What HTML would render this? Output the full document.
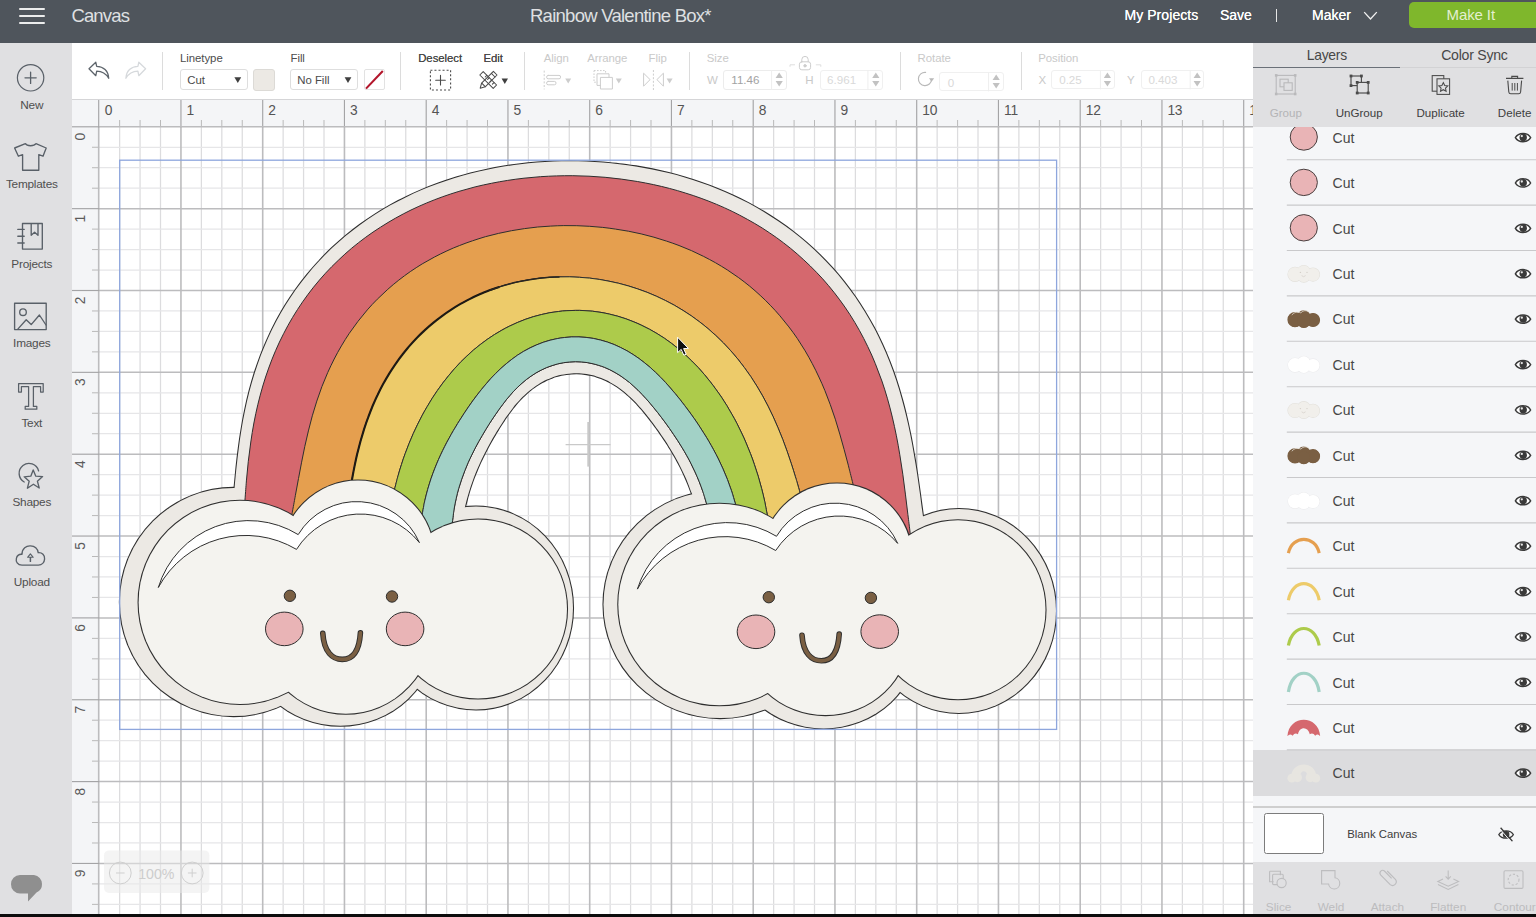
<!DOCTYPE html><html><head><meta charset="utf-8"><title>Canvas</title><style>

*{box-sizing:border-box;margin:0;padding:0}
html,body{width:1536px;height:917px;overflow:hidden;background:#fff}
body{font-family:"Liberation Sans",sans-serif;position:relative;color:#4a4a4a}
.abs{position:absolute}
#top{left:0;top:0;width:1536px;height:43.5px;background:#4f555c}
#top .t{position:absolute;color:#f2f2f2;white-space:nowrap}
#side{left:0;top:43px;width:72px;height:872px;background:#e0e0e2}
#side .lbl{position:absolute;left:0;width:63.6px;text-align:center;font-size:11.8px;color:#4f4f4f;letter-spacing:-.22px}
#tool{left:72px;top:43px;width:1181px;height:56px;background:#fff}
#tool .l{position:absolute;font-size:11.4px;letter-spacing:-.05px;color:#4c4c4c;white-space:nowrap}
#tool .d{color:#c9c9c9}
#tool .sep{position:absolute;top:9px;width:1px;height:38px;background:#dcdcdc}
#tool .box{position:absolute;border:1px solid #dedede;border-radius:3px;background:#fff;font-size:11.5px;color:#4a4a4a;padding:0 0 0 6px;line-height:18px;white-space:nowrap}
#tool .boxd{border-color:#f0f0f0;color:#d9d9d9}
#canvas{left:72px;top:99px;width:1181px;height:815px;background:#fff;overflow:hidden}
#bottombar{left:0;top:914px;width:1536px;height:3px;background:#0c0c0c}

</style></head><body>
<svg class="abs" style="left:72px;top:99px" width="1181" height="815" viewBox="72 99 1181 815">
<rect x="72" y="99" width="1181" height="27.8" fill="#f4f5f7"/>
<rect x="72" y="99" width="27.2" height="816" fill="#f4f5f7"/>
<path d="M119.64 126.8V915" stroke="#dcdcde" stroke-width="1.25"/>
<path d="M140.07 126.8V915" stroke="#dcdcde" stroke-width="1.25"/>
<path d="M160.51 126.8V915" stroke="#dcdcde" stroke-width="1.25"/>
<path d="M201.39 126.8V915" stroke="#dcdcde" stroke-width="1.25"/>
<path d="M221.82 126.8V915" stroke="#dcdcde" stroke-width="1.25"/>
<path d="M242.26 126.8V915" stroke="#dcdcde" stroke-width="1.25"/>
<path d="M283.14 126.8V915" stroke="#dcdcde" stroke-width="1.25"/>
<path d="M303.57 126.8V915" stroke="#dcdcde" stroke-width="1.25"/>
<path d="M324.01 126.8V915" stroke="#dcdcde" stroke-width="1.25"/>
<path d="M364.89 126.8V915" stroke="#dcdcde" stroke-width="1.25"/>
<path d="M385.32 126.8V915" stroke="#dcdcde" stroke-width="1.25"/>
<path d="M405.76 126.8V915" stroke="#dcdcde" stroke-width="1.25"/>
<path d="M446.64 126.8V915" stroke="#dcdcde" stroke-width="1.25"/>
<path d="M467.07 126.8V915" stroke="#dcdcde" stroke-width="1.25"/>
<path d="M487.51 126.8V915" stroke="#dcdcde" stroke-width="1.25"/>
<path d="M528.39 126.8V915" stroke="#dcdcde" stroke-width="1.25"/>
<path d="M548.83 126.8V915" stroke="#dcdcde" stroke-width="1.25"/>
<path d="M569.26 126.8V915" stroke="#dcdcde" stroke-width="1.25"/>
<path d="M610.14 126.8V915" stroke="#dcdcde" stroke-width="1.25"/>
<path d="M630.58 126.8V915" stroke="#dcdcde" stroke-width="1.25"/>
<path d="M651.01 126.8V915" stroke="#dcdcde" stroke-width="1.25"/>
<path d="M691.89 126.8V915" stroke="#dcdcde" stroke-width="1.25"/>
<path d="M712.33 126.8V915" stroke="#dcdcde" stroke-width="1.25"/>
<path d="M732.76 126.8V915" stroke="#dcdcde" stroke-width="1.25"/>
<path d="M773.64 126.8V915" stroke="#dcdcde" stroke-width="1.25"/>
<path d="M794.08 126.8V915" stroke="#dcdcde" stroke-width="1.25"/>
<path d="M814.51 126.8V915" stroke="#dcdcde" stroke-width="1.25"/>
<path d="M855.39 126.8V915" stroke="#dcdcde" stroke-width="1.25"/>
<path d="M875.83 126.8V915" stroke="#dcdcde" stroke-width="1.25"/>
<path d="M896.26 126.8V915" stroke="#dcdcde" stroke-width="1.25"/>
<path d="M937.14 126.8V915" stroke="#dcdcde" stroke-width="1.25"/>
<path d="M957.58 126.8V915" stroke="#dcdcde" stroke-width="1.25"/>
<path d="M978.01 126.8V915" stroke="#dcdcde" stroke-width="1.25"/>
<path d="M1018.89 126.8V915" stroke="#dcdcde" stroke-width="1.25"/>
<path d="M1039.33 126.8V915" stroke="#dcdcde" stroke-width="1.25"/>
<path d="M1059.76 126.8V915" stroke="#dcdcde" stroke-width="1.25"/>
<path d="M1100.64 126.8V915" stroke="#dcdcde" stroke-width="1.25"/>
<path d="M1121.08 126.8V915" stroke="#dcdcde" stroke-width="1.25"/>
<path d="M1141.51 126.8V915" stroke="#dcdcde" stroke-width="1.25"/>
<path d="M1182.39 126.8V915" stroke="#dcdcde" stroke-width="1.25"/>
<path d="M1202.83 126.8V915" stroke="#dcdcde" stroke-width="1.25"/>
<path d="M1223.26 126.8V915" stroke="#dcdcde" stroke-width="1.25"/>
<path d="M99.2 147.26H1253" stroke="#e6e6e8" stroke-width="1.25"/>
<path d="M99.2 167.72H1253" stroke="#e6e6e8" stroke-width="1.25"/>
<path d="M99.2 188.19H1253" stroke="#e6e6e8" stroke-width="1.25"/>
<path d="M99.2 229.11H1253" stroke="#e6e6e8" stroke-width="1.25"/>
<path d="M99.2 249.57H1253" stroke="#e6e6e8" stroke-width="1.25"/>
<path d="M99.2 270.04H1253" stroke="#e6e6e8" stroke-width="1.25"/>
<path d="M99.2 310.96H1253" stroke="#e6e6e8" stroke-width="1.25"/>
<path d="M99.2 331.43H1253" stroke="#e6e6e8" stroke-width="1.25"/>
<path d="M99.2 351.89H1253" stroke="#e6e6e8" stroke-width="1.25"/>
<path d="M99.2 392.81H1253" stroke="#e6e6e8" stroke-width="1.25"/>
<path d="M99.2 413.27H1253" stroke="#e6e6e8" stroke-width="1.25"/>
<path d="M99.2 433.74H1253" stroke="#e6e6e8" stroke-width="1.25"/>
<path d="M99.2 474.66H1253" stroke="#e6e6e8" stroke-width="1.25"/>
<path d="M99.2 495.12H1253" stroke="#e6e6e8" stroke-width="1.25"/>
<path d="M99.2 515.59H1253" stroke="#e6e6e8" stroke-width="1.25"/>
<path d="M99.2 556.51H1253" stroke="#e6e6e8" stroke-width="1.25"/>
<path d="M99.2 576.97H1253" stroke="#e6e6e8" stroke-width="1.25"/>
<path d="M99.2 597.44H1253" stroke="#e6e6e8" stroke-width="1.25"/>
<path d="M99.2 638.36H1253" stroke="#e6e6e8" stroke-width="1.25"/>
<path d="M99.2 658.82H1253" stroke="#e6e6e8" stroke-width="1.25"/>
<path d="M99.2 679.29H1253" stroke="#e6e6e8" stroke-width="1.25"/>
<path d="M99.2 720.21H1253" stroke="#e6e6e8" stroke-width="1.25"/>
<path d="M99.2 740.67H1253" stroke="#e6e6e8" stroke-width="1.25"/>
<path d="M99.2 761.14H1253" stroke="#e6e6e8" stroke-width="1.25"/>
<path d="M99.2 802.06H1253" stroke="#e6e6e8" stroke-width="1.25"/>
<path d="M99.2 822.52H1253" stroke="#e6e6e8" stroke-width="1.25"/>
<path d="M99.2 842.99H1253" stroke="#e6e6e8" stroke-width="1.25"/>
<path d="M99.2 883.91H1253" stroke="#e6e6e8" stroke-width="1.25"/>
<path d="M99.2 904.37H1253" stroke="#e6e6e8" stroke-width="1.25"/>
<path d="M119.64 120V126.8" stroke="#b9b9b9" stroke-width="1"/>
<path d="M140.07 120V126.8" stroke="#b9b9b9" stroke-width="1"/>
<path d="M160.51 120V126.8" stroke="#b9b9b9" stroke-width="1"/>
<path d="M201.39 120V126.8" stroke="#b9b9b9" stroke-width="1"/>
<path d="M221.82 120V126.8" stroke="#b9b9b9" stroke-width="1"/>
<path d="M242.26 120V126.8" stroke="#b9b9b9" stroke-width="1"/>
<path d="M283.14 120V126.8" stroke="#b9b9b9" stroke-width="1"/>
<path d="M303.57 120V126.8" stroke="#b9b9b9" stroke-width="1"/>
<path d="M324.01 120V126.8" stroke="#b9b9b9" stroke-width="1"/>
<path d="M364.89 120V126.8" stroke="#b9b9b9" stroke-width="1"/>
<path d="M385.32 120V126.8" stroke="#b9b9b9" stroke-width="1"/>
<path d="M405.76 120V126.8" stroke="#b9b9b9" stroke-width="1"/>
<path d="M446.64 120V126.8" stroke="#b9b9b9" stroke-width="1"/>
<path d="M467.07 120V126.8" stroke="#b9b9b9" stroke-width="1"/>
<path d="M487.51 120V126.8" stroke="#b9b9b9" stroke-width="1"/>
<path d="M528.39 120V126.8" stroke="#b9b9b9" stroke-width="1"/>
<path d="M548.83 120V126.8" stroke="#b9b9b9" stroke-width="1"/>
<path d="M569.26 120V126.8" stroke="#b9b9b9" stroke-width="1"/>
<path d="M610.14 120V126.8" stroke="#b9b9b9" stroke-width="1"/>
<path d="M630.58 120V126.8" stroke="#b9b9b9" stroke-width="1"/>
<path d="M651.01 120V126.8" stroke="#b9b9b9" stroke-width="1"/>
<path d="M691.89 120V126.8" stroke="#b9b9b9" stroke-width="1"/>
<path d="M712.33 120V126.8" stroke="#b9b9b9" stroke-width="1"/>
<path d="M732.76 120V126.8" stroke="#b9b9b9" stroke-width="1"/>
<path d="M773.64 120V126.8" stroke="#b9b9b9" stroke-width="1"/>
<path d="M794.08 120V126.8" stroke="#b9b9b9" stroke-width="1"/>
<path d="M814.51 120V126.8" stroke="#b9b9b9" stroke-width="1"/>
<path d="M855.39 120V126.8" stroke="#b9b9b9" stroke-width="1"/>
<path d="M875.83 120V126.8" stroke="#b9b9b9" stroke-width="1"/>
<path d="M896.26 120V126.8" stroke="#b9b9b9" stroke-width="1"/>
<path d="M937.14 120V126.8" stroke="#b9b9b9" stroke-width="1"/>
<path d="M957.58 120V126.8" stroke="#b9b9b9" stroke-width="1"/>
<path d="M978.01 120V126.8" stroke="#b9b9b9" stroke-width="1"/>
<path d="M1018.89 120V126.8" stroke="#b9b9b9" stroke-width="1"/>
<path d="M1039.33 120V126.8" stroke="#b9b9b9" stroke-width="1"/>
<path d="M1059.76 120V126.8" stroke="#b9b9b9" stroke-width="1"/>
<path d="M1100.64 120V126.8" stroke="#b9b9b9" stroke-width="1"/>
<path d="M1121.08 120V126.8" stroke="#b9b9b9" stroke-width="1"/>
<path d="M1141.51 120V126.8" stroke="#b9b9b9" stroke-width="1"/>
<path d="M1182.39 120V126.8" stroke="#b9b9b9" stroke-width="1"/>
<path d="M1202.83 120V126.8" stroke="#b9b9b9" stroke-width="1"/>
<path d="M1223.26 120V126.8" stroke="#b9b9b9" stroke-width="1"/>
<path d="M92 147.26H99.2" stroke="#b9b9b9" stroke-width="1"/>
<path d="M92 167.72H99.2" stroke="#b9b9b9" stroke-width="1"/>
<path d="M92 188.19H99.2" stroke="#b9b9b9" stroke-width="1"/>
<path d="M92 229.11H99.2" stroke="#b9b9b9" stroke-width="1"/>
<path d="M92 249.57H99.2" stroke="#b9b9b9" stroke-width="1"/>
<path d="M92 270.04H99.2" stroke="#b9b9b9" stroke-width="1"/>
<path d="M92 310.96H99.2" stroke="#b9b9b9" stroke-width="1"/>
<path d="M92 331.43H99.2" stroke="#b9b9b9" stroke-width="1"/>
<path d="M92 351.89H99.2" stroke="#b9b9b9" stroke-width="1"/>
<path d="M92 392.81H99.2" stroke="#b9b9b9" stroke-width="1"/>
<path d="M92 413.27H99.2" stroke="#b9b9b9" stroke-width="1"/>
<path d="M92 433.74H99.2" stroke="#b9b9b9" stroke-width="1"/>
<path d="M92 474.66H99.2" stroke="#b9b9b9" stroke-width="1"/>
<path d="M92 495.12H99.2" stroke="#b9b9b9" stroke-width="1"/>
<path d="M92 515.59H99.2" stroke="#b9b9b9" stroke-width="1"/>
<path d="M92 556.51H99.2" stroke="#b9b9b9" stroke-width="1"/>
<path d="M92 576.97H99.2" stroke="#b9b9b9" stroke-width="1"/>
<path d="M92 597.44H99.2" stroke="#b9b9b9" stroke-width="1"/>
<path d="M92 638.36H99.2" stroke="#b9b9b9" stroke-width="1"/>
<path d="M92 658.82H99.2" stroke="#b9b9b9" stroke-width="1"/>
<path d="M92 679.29H99.2" stroke="#b9b9b9" stroke-width="1"/>
<path d="M92 720.21H99.2" stroke="#b9b9b9" stroke-width="1"/>
<path d="M92 740.67H99.2" stroke="#b9b9b9" stroke-width="1"/>
<path d="M92 761.14H99.2" stroke="#b9b9b9" stroke-width="1"/>
<path d="M92 802.06H99.2" stroke="#b9b9b9" stroke-width="1"/>
<path d="M92 822.52H99.2" stroke="#b9b9b9" stroke-width="1"/>
<path d="M92 842.99H99.2" stroke="#b9b9b9" stroke-width="1"/>
<path d="M92 883.91H99.2" stroke="#b9b9b9" stroke-width="1"/>
<path d="M92 904.37H99.2" stroke="#b9b9b9" stroke-width="1"/>
<path d="M98.70 126.8V915" stroke="#bcbcbe" stroke-width="1.6"/>
<path d="M98.70 99V127.4" stroke="#a4a4a6" stroke-width="1.15"/>
<path d="M180.95 126.8V915" stroke="#bcbcbe" stroke-width="1.6"/>
<path d="M180.95 99V127.4" stroke="#a4a4a6" stroke-width="1.15"/>
<path d="M262.70 126.8V915" stroke="#bcbcbe" stroke-width="1.6"/>
<path d="M262.70 99V127.4" stroke="#a4a4a6" stroke-width="1.15"/>
<path d="M344.45 126.8V915" stroke="#bcbcbe" stroke-width="1.6"/>
<path d="M344.45 99V127.4" stroke="#a4a4a6" stroke-width="1.15"/>
<path d="M426.20 126.8V915" stroke="#bcbcbe" stroke-width="1.6"/>
<path d="M426.20 99V127.4" stroke="#a4a4a6" stroke-width="1.15"/>
<path d="M507.95 126.8V915" stroke="#bcbcbe" stroke-width="1.6"/>
<path d="M507.95 99V127.4" stroke="#a4a4a6" stroke-width="1.15"/>
<path d="M589.70 126.8V915" stroke="#bcbcbe" stroke-width="1.6"/>
<path d="M589.70 99V127.4" stroke="#a4a4a6" stroke-width="1.15"/>
<path d="M671.45 126.8V915" stroke="#bcbcbe" stroke-width="1.6"/>
<path d="M671.45 99V127.4" stroke="#a4a4a6" stroke-width="1.15"/>
<path d="M753.20 126.8V915" stroke="#bcbcbe" stroke-width="1.6"/>
<path d="M753.20 99V127.4" stroke="#a4a4a6" stroke-width="1.15"/>
<path d="M834.95 126.8V915" stroke="#bcbcbe" stroke-width="1.6"/>
<path d="M834.95 99V127.4" stroke="#a4a4a6" stroke-width="1.15"/>
<path d="M916.70 126.8V915" stroke="#bcbcbe" stroke-width="1.6"/>
<path d="M916.70 99V127.4" stroke="#a4a4a6" stroke-width="1.15"/>
<path d="M998.45 126.8V915" stroke="#bcbcbe" stroke-width="1.6"/>
<path d="M998.45 99V127.4" stroke="#a4a4a6" stroke-width="1.15"/>
<path d="M1080.20 126.8V915" stroke="#bcbcbe" stroke-width="1.6"/>
<path d="M1080.20 99V127.4" stroke="#a4a4a6" stroke-width="1.15"/>
<path d="M1161.95 126.8V915" stroke="#bcbcbe" stroke-width="1.6"/>
<path d="M1161.95 99V127.4" stroke="#a4a4a6" stroke-width="1.15"/>
<path d="M1243.70 126.8V915" stroke="#bcbcbe" stroke-width="1.6"/>
<path d="M1243.70 99V127.4" stroke="#a4a4a6" stroke-width="1.15"/>
<path d="M98.7 126.80H1253" stroke="#bcbcbe" stroke-width="1.5"/>
<path d="M72 126.80H99.3" stroke="#a4a4a6" stroke-width="1.15"/>
<path d="M98.7 208.65H1253" stroke="#bcbcbe" stroke-width="1.5"/>
<path d="M72 208.65H99.3" stroke="#a4a4a6" stroke-width="1.15"/>
<path d="M98.7 290.50H1253" stroke="#bcbcbe" stroke-width="1.5"/>
<path d="M72 290.50H99.3" stroke="#a4a4a6" stroke-width="1.15"/>
<path d="M98.7 372.35H1253" stroke="#bcbcbe" stroke-width="1.5"/>
<path d="M72 372.35H99.3" stroke="#a4a4a6" stroke-width="1.15"/>
<path d="M98.7 454.20H1253" stroke="#bcbcbe" stroke-width="1.5"/>
<path d="M72 454.20H99.3" stroke="#a4a4a6" stroke-width="1.15"/>
<path d="M98.7 536.05H1253" stroke="#bcbcbe" stroke-width="1.5"/>
<path d="M72 536.05H99.3" stroke="#a4a4a6" stroke-width="1.15"/>
<path d="M98.7 617.90H1253" stroke="#bcbcbe" stroke-width="1.5"/>
<path d="M72 617.90H99.3" stroke="#a4a4a6" stroke-width="1.15"/>
<path d="M98.7 699.75H1253" stroke="#bcbcbe" stroke-width="1.5"/>
<path d="M72 699.75H99.3" stroke="#a4a4a6" stroke-width="1.15"/>
<path d="M98.7 781.60H1253" stroke="#bcbcbe" stroke-width="1.5"/>
<path d="M72 781.60H99.3" stroke="#a4a4a6" stroke-width="1.15"/>
<path d="M98.7 863.45H1253" stroke="#bcbcbe" stroke-width="1.5"/>
<path d="M72 863.45H99.3" stroke="#a4a4a6" stroke-width="1.15"/>
<text x="104.8" y="115" font-size="13.8" fill="#545454" font-family="Liberation Sans" letter-spacing="-.3">0</text>
<text x="186.5" y="115" font-size="13.8" fill="#545454" font-family="Liberation Sans" letter-spacing="-.3">1</text>
<text x="268.3" y="115" font-size="13.8" fill="#545454" font-family="Liberation Sans" letter-spacing="-.3">2</text>
<text x="350.1" y="115" font-size="13.8" fill="#545454" font-family="Liberation Sans" letter-spacing="-.3">3</text>
<text x="431.8" y="115" font-size="13.8" fill="#545454" font-family="Liberation Sans" letter-spacing="-.3">4</text>
<text x="513.5" y="115" font-size="13.8" fill="#545454" font-family="Liberation Sans" letter-spacing="-.3">5</text>
<text x="595.3" y="115" font-size="13.8" fill="#545454" font-family="Liberation Sans" letter-spacing="-.3">6</text>
<text x="677.1" y="115" font-size="13.8" fill="#545454" font-family="Liberation Sans" letter-spacing="-.3">7</text>
<text x="758.8" y="115" font-size="13.8" fill="#545454" font-family="Liberation Sans" letter-spacing="-.3">8</text>
<text x="840.6" y="115" font-size="13.8" fill="#545454" font-family="Liberation Sans" letter-spacing="-.3">9</text>
<text x="922.3" y="115" font-size="13.8" fill="#545454" font-family="Liberation Sans" letter-spacing="-.3">10</text>
<text x="1004.1" y="115" font-size="13.8" fill="#545454" font-family="Liberation Sans" letter-spacing="-.3">11</text>
<text x="1085.8" y="115" font-size="13.8" fill="#545454" font-family="Liberation Sans" letter-spacing="-.3">12</text>
<text x="1167.5" y="115" font-size="13.8" fill="#545454" font-family="Liberation Sans" letter-spacing="-.3">13</text>
<text x="1249.3" y="115" font-size="13.8" fill="#545454" font-family="Liberation Sans" letter-spacing="-.3">14</text>
<text transform="translate(85.1 132.9) rotate(-90)" text-anchor="end" font-size="13.8" fill="#5b5b5b" font-family="Liberation Sans">0</text>
<text transform="translate(85.1 214.7) rotate(-90)" text-anchor="end" font-size="13.8" fill="#5b5b5b" font-family="Liberation Sans">1</text>
<text transform="translate(85.1 296.6) rotate(-90)" text-anchor="end" font-size="13.8" fill="#5b5b5b" font-family="Liberation Sans">2</text>
<text transform="translate(85.1 378.4) rotate(-90)" text-anchor="end" font-size="13.8" fill="#5b5b5b" font-family="Liberation Sans">3</text>
<text transform="translate(85.1 460.3) rotate(-90)" text-anchor="end" font-size="13.8" fill="#5b5b5b" font-family="Liberation Sans">4</text>
<text transform="translate(85.1 542.1) rotate(-90)" text-anchor="end" font-size="13.8" fill="#5b5b5b" font-family="Liberation Sans">5</text>
<text transform="translate(85.1 624.0) rotate(-90)" text-anchor="end" font-size="13.8" fill="#5b5b5b" font-family="Liberation Sans">6</text>
<text transform="translate(85.1 705.8) rotate(-90)" text-anchor="end" font-size="13.8" fill="#5b5b5b" font-family="Liberation Sans">7</text>
<text transform="translate(85.1 787.7) rotate(-90)" text-anchor="end" font-size="13.8" fill="#5b5b5b" font-family="Liberation Sans">8</text>
<text transform="translate(85.1 869.5) rotate(-90)" text-anchor="end" font-size="13.8" fill="#5b5b5b" font-family="Liberation Sans">9</text>
<path d="M230.4 532.2C231.1 524.7 233.6 498.2 234.6 487.4C235.7 476.6 235.8 474.2 236.5 467.6C237.2 461.1 237.9 454.6 238.8 448.2C239.6 441.8 240.5 435.4 241.6 429.1C242.6 422.7 243.8 416.4 245.1 410.2C246.4 403.9 247.8 397.7 249.4 391.6C251.0 385.5 252.7 379.4 254.6 373.4C256.5 367.4 258.6 361.4 260.8 355.5C263.1 349.7 265.5 343.8 268.1 338.1C270.7 332.4 273.4 326.8 276.3 321.3C279.3 315.8 282.3 310.4 285.6 305.1C288.9 299.8 292.3 294.7 295.9 289.6C299.4 284.6 303.2 279.7 307.1 274.9C311.0 270.2 315.0 265.5 319.2 261.1C323.3 256.6 327.6 252.2 332.0 248.1C336.5 243.9 341.0 239.9 345.6 236.0C350.3 232.2 355.0 228.5 359.9 224.9C364.7 221.4 369.7 218.0 374.7 214.8C379.7 211.5 384.8 208.5 389.9 205.6C395.1 202.7 400.3 199.9 405.6 197.4C410.8 194.8 416.1 192.4 421.5 190.1C426.8 187.8 432.2 185.7 437.7 183.7C443.1 181.7 448.5 179.9 454.0 178.2C459.5 176.5 465.0 175.0 470.5 173.5C476.0 172.1 481.5 170.8 487.0 169.7C492.5 168.5 498.0 167.5 503.6 166.6C509.1 165.7 514.6 164.9 520.2 164.2C525.7 163.5 531.2 163.0 536.8 162.6C542.3 162.1 547.8 161.8 553.3 161.6C558.9 161.4 564.4 161.2 569.9 161.2C575.4 161.2 580.9 161.4 586.4 161.6C591.9 161.8 597.4 162.1 602.9 162.5C608.4 163.0 613.9 163.5 619.4 164.2C624.9 164.8 630.4 165.6 635.9 166.4C641.3 167.3 646.8 168.3 652.3 169.4C657.7 170.5 663.2 171.7 668.6 173.1C674.0 174.4 679.4 175.9 684.8 177.5C690.2 179.1 695.6 180.8 701.0 182.7C706.3 184.5 711.7 186.5 717.0 188.7C722.3 190.8 727.5 193.1 732.7 195.5C738.0 197.9 743.1 200.4 748.3 203.1C753.4 205.9 758.5 208.7 763.5 211.7C768.5 214.7 773.4 217.9 778.3 221.2C783.2 224.5 788.0 227.9 792.7 231.5C797.4 235.1 802.0 238.9 806.5 242.8C811.0 246.7 815.4 250.8 819.7 255.0C824.0 259.2 828.2 263.6 832.2 268.0C836.3 272.5 840.2 277.2 844.0 281.9C847.7 286.7 851.4 291.6 854.9 296.6C858.4 301.6 861.7 306.8 864.9 312.0C868.1 317.3 871.2 322.6 874.1 328.1C877.0 333.5 879.7 339.1 882.3 344.8C884.9 350.4 887.3 356.2 889.6 362.0C891.9 367.8 894.0 373.7 896.0 379.7C898.0 385.7 899.8 391.7 901.5 397.9C903.3 404.0 904.8 410.1 906.3 416.4C907.8 422.6 909.1 428.9 910.4 435.2C911.7 441.6 912.8 448.0 913.9 454.5C915.1 461.0 916.1 467.5 917.1 474.1C918.1 480.8 919.0 487.5 920.0 494.3C920.9 501.1 921.3 504.2 922.8 515.1C924.3 526.0 927.9 552.2 929.0 559.7L708.0 535.6C705.3 528.6 695.2 502.2 691.9 493.6C688.6 485.0 689.5 487.0 688.2 483.9C687.0 480.8 685.7 477.9 684.4 475.0C683.1 472.2 681.8 469.5 680.5 466.9C679.2 464.3 677.8 461.9 676.6 459.5C675.3 457.1 674.0 454.9 672.7 452.7C671.4 450.5 670.1 448.4 668.9 446.4C667.6 444.4 666.4 442.4 665.2 440.6C663.9 438.7 662.7 436.9 661.5 435.2C660.3 433.4 659.2 431.7 658.0 430.1C656.8 428.5 655.7 426.9 654.5 425.3C653.4 423.8 652.3 422.3 651.1 420.8C650.0 419.3 648.9 417.9 647.8 416.5C646.6 415.1 645.5 413.7 644.4 412.3C643.3 411.0 642.2 409.6 641.0 408.3C639.9 407.0 638.8 405.8 637.6 404.5C636.4 403.3 635.3 402.0 634.1 400.8C632.9 399.6 631.7 398.4 630.5 397.3C629.3 396.1 628.0 395.0 626.8 393.9C625.5 392.8 624.2 391.7 622.9 390.7C621.6 389.7 620.3 388.7 618.9 387.7C617.5 386.7 616.1 385.8 614.7 384.9C613.3 384.0 611.9 383.2 610.4 382.4C608.9 381.6 607.4 380.8 605.9 380.1C604.4 379.4 602.8 378.7 601.2 378.1C599.7 377.5 598.1 376.9 596.5 376.4C594.9 375.9 593.2 375.5 591.6 375.1C589.9 374.7 588.3 374.4 586.6 374.1C584.9 373.9 583.2 373.7 581.6 373.5C579.9 373.4 578.2 373.3 576.5 373.3C574.8 373.3 573.1 373.3 571.4 373.4C569.7 373.5 568.0 373.7 566.4 373.9C564.7 374.2 563.0 374.5 561.4 374.8C559.7 375.2 558.1 375.6 556.5 376.1C554.8 376.5 553.2 377.1 551.7 377.7C550.1 378.3 548.5 378.9 547.0 379.6C545.5 380.3 544.0 381.1 542.5 381.8C541.1 382.6 539.6 383.5 538.2 384.4C536.8 385.3 535.4 386.2 534.1 387.2C532.7 388.1 531.4 389.1 530.1 390.2C528.8 391.2 527.6 392.3 526.3 393.4C525.1 394.5 523.9 395.6 522.7 396.8C521.6 398.0 520.4 399.2 519.3 400.4C518.2 401.6 517.1 402.8 516.0 404.1C515.0 405.3 513.9 406.6 512.9 407.9C511.9 409.2 510.9 410.6 509.9 411.9C508.9 413.3 507.9 414.6 506.9 416.0C505.9 417.4 504.9 418.8 504.0 420.3C503.0 421.7 502.1 423.2 501.1 424.7C500.1 426.2 499.2 427.7 498.2 429.3C497.2 430.8 496.3 432.4 495.3 434.1C494.3 435.7 493.3 437.4 492.3 439.1C491.3 440.8 490.3 442.6 489.3 444.5C488.3 446.3 487.3 448.2 486.3 450.2C485.2 452.1 484.2 454.2 483.2 456.3C482.1 458.4 481.1 460.6 480.0 462.9C479.0 465.2 477.9 467.5 476.9 470.0C475.9 472.5 474.8 475.1 473.8 477.7C472.8 480.4 471.8 483.2 470.8 486.2C469.8 489.1 468.9 492.1 468.0 495.3C467.1 498.5 467.7 496.3 465.4 505.2C463.0 514.2 455.9 541.5 454.0 548.8Z" fill="#ece9e4" stroke="#2e2e2e" stroke-width="2.1" stroke-linejoin="round"/>
<ellipse cx="233.6" cy="602" rx="113.7" ry="114.1" fill="#ece9e4" stroke="#2e2e2e" stroke-width="2.1"/>
<ellipse cx="476" cy="608" rx="97.0" ry="101.5" fill="#ece9e4" stroke="#2e2e2e" stroke-width="2.1"/>
<ellipse cx="340.3" cy="633.4" rx="96.0" ry="92.3" fill="#ece9e4" stroke="#2e2e2e" stroke-width="2.1"/>
<ellipse cx="720.3" cy="604.4" rx="116.8" ry="113.7" fill="#ece9e4" stroke="#2e2e2e" stroke-width="2.1"/>
<ellipse cx="959" cy="611" rx="97.0" ry="101.9" fill="#ece9e4" stroke="#2e2e2e" stroke-width="2.1"/>
<ellipse cx="823.55" cy="638.9" rx="95.0" ry="89.5" fill="#ece9e4" stroke="#2e2e2e" stroke-width="2.1"/>
<path d="M230.4 532.2C231.1 524.7 233.6 498.2 234.6 487.4C235.7 476.6 235.8 474.2 236.5 467.6C237.2 461.1 237.9 454.6 238.8 448.2C239.6 441.8 240.5 435.4 241.6 429.1C242.6 422.7 243.8 416.4 245.1 410.2C246.4 403.9 247.8 397.7 249.4 391.6C251.0 385.5 252.7 379.4 254.6 373.4C256.5 367.4 258.6 361.4 260.8 355.5C263.1 349.7 265.5 343.8 268.1 338.1C270.7 332.4 273.4 326.8 276.3 321.3C279.3 315.8 282.3 310.4 285.6 305.1C288.9 299.8 292.3 294.7 295.9 289.6C299.4 284.6 303.2 279.7 307.1 274.9C311.0 270.2 315.0 265.5 319.2 261.1C323.3 256.6 327.6 252.2 332.0 248.1C336.5 243.9 341.0 239.9 345.6 236.0C350.3 232.2 355.0 228.5 359.9 224.9C364.7 221.4 369.7 218.0 374.7 214.8C379.7 211.5 384.8 208.5 389.9 205.6C395.1 202.7 400.3 199.9 405.6 197.4C410.8 194.8 416.1 192.4 421.5 190.1C426.8 187.8 432.2 185.7 437.7 183.7C443.1 181.7 448.5 179.9 454.0 178.2C459.5 176.5 465.0 175.0 470.5 173.5C476.0 172.1 481.5 170.8 487.0 169.7C492.5 168.5 498.0 167.5 503.6 166.6C509.1 165.7 514.6 164.9 520.2 164.2C525.7 163.5 531.2 163.0 536.8 162.6C542.3 162.1 547.8 161.8 553.3 161.6C558.9 161.4 564.4 161.2 569.9 161.2C575.4 161.2 580.9 161.4 586.4 161.6C591.9 161.8 597.4 162.1 602.9 162.5C608.4 163.0 613.9 163.5 619.4 164.2C624.9 164.8 630.4 165.6 635.9 166.4C641.3 167.3 646.8 168.3 652.3 169.4C657.7 170.5 663.2 171.7 668.6 173.1C674.0 174.4 679.4 175.9 684.8 177.5C690.2 179.1 695.6 180.8 701.0 182.7C706.3 184.5 711.7 186.5 717.0 188.7C722.3 190.8 727.5 193.1 732.7 195.5C738.0 197.9 743.1 200.4 748.3 203.1C753.4 205.9 758.5 208.7 763.5 211.7C768.5 214.7 773.4 217.9 778.3 221.2C783.2 224.5 788.0 227.9 792.7 231.5C797.4 235.1 802.0 238.9 806.5 242.8C811.0 246.7 815.4 250.8 819.7 255.0C824.0 259.2 828.2 263.6 832.2 268.0C836.3 272.5 840.2 277.2 844.0 281.9C847.7 286.7 851.4 291.6 854.9 296.6C858.4 301.6 861.7 306.8 864.9 312.0C868.1 317.3 871.2 322.6 874.1 328.1C877.0 333.5 879.7 339.1 882.3 344.8C884.9 350.4 887.3 356.2 889.6 362.0C891.9 367.8 894.0 373.7 896.0 379.7C898.0 385.7 899.8 391.7 901.5 397.9C903.3 404.0 904.8 410.1 906.3 416.4C907.8 422.6 909.1 428.9 910.4 435.2C911.7 441.6 912.8 448.0 913.9 454.5C915.1 461.0 916.1 467.5 917.1 474.1C918.1 480.8 919.0 487.5 920.0 494.3C920.9 501.1 921.3 504.2 922.8 515.1C924.3 526.0 927.9 552.2 929.0 559.7L708.0 535.6C705.3 528.6 695.2 502.2 691.9 493.6C688.6 485.0 689.5 487.0 688.2 483.9C687.0 480.8 685.7 477.9 684.4 475.0C683.1 472.2 681.8 469.5 680.5 466.9C679.2 464.3 677.8 461.9 676.6 459.5C675.3 457.1 674.0 454.9 672.7 452.7C671.4 450.5 670.1 448.4 668.9 446.4C667.6 444.4 666.4 442.4 665.2 440.6C663.9 438.7 662.7 436.9 661.5 435.2C660.3 433.4 659.2 431.7 658.0 430.1C656.8 428.5 655.7 426.9 654.5 425.3C653.4 423.8 652.3 422.3 651.1 420.8C650.0 419.3 648.9 417.9 647.8 416.5C646.6 415.1 645.5 413.7 644.4 412.3C643.3 411.0 642.2 409.6 641.0 408.3C639.9 407.0 638.8 405.8 637.6 404.5C636.4 403.3 635.3 402.0 634.1 400.8C632.9 399.6 631.7 398.4 630.5 397.3C629.3 396.1 628.0 395.0 626.8 393.9C625.5 392.8 624.2 391.7 622.9 390.7C621.6 389.7 620.3 388.7 618.9 387.7C617.5 386.7 616.1 385.8 614.7 384.9C613.3 384.0 611.9 383.2 610.4 382.4C608.9 381.6 607.4 380.8 605.9 380.1C604.4 379.4 602.8 378.7 601.2 378.1C599.7 377.5 598.1 376.9 596.5 376.4C594.9 375.9 593.2 375.5 591.6 375.1C589.9 374.7 588.3 374.4 586.6 374.1C584.9 373.9 583.2 373.7 581.6 373.5C579.9 373.4 578.2 373.3 576.5 373.3C574.8 373.3 573.1 373.3 571.4 373.4C569.7 373.5 568.0 373.7 566.4 373.9C564.7 374.2 563.0 374.5 561.4 374.8C559.7 375.2 558.1 375.6 556.5 376.1C554.8 376.5 553.2 377.1 551.7 377.7C550.1 378.3 548.5 378.9 547.0 379.6C545.5 380.3 544.0 381.1 542.5 381.8C541.1 382.6 539.6 383.5 538.2 384.4C536.8 385.3 535.4 386.2 534.1 387.2C532.7 388.1 531.4 389.1 530.1 390.2C528.8 391.2 527.6 392.3 526.3 393.4C525.1 394.5 523.9 395.6 522.7 396.8C521.6 398.0 520.4 399.2 519.3 400.4C518.2 401.6 517.1 402.8 516.0 404.1C515.0 405.3 513.9 406.6 512.9 407.9C511.9 409.2 510.9 410.6 509.9 411.9C508.9 413.3 507.9 414.6 506.9 416.0C505.9 417.4 504.9 418.8 504.0 420.3C503.0 421.7 502.1 423.2 501.1 424.7C500.1 426.2 499.2 427.7 498.2 429.3C497.2 430.8 496.3 432.4 495.3 434.1C494.3 435.7 493.3 437.4 492.3 439.1C491.3 440.8 490.3 442.6 489.3 444.5C488.3 446.3 487.3 448.2 486.3 450.2C485.2 452.1 484.2 454.2 483.2 456.3C482.1 458.4 481.1 460.6 480.0 462.9C479.0 465.2 477.9 467.5 476.9 470.0C475.9 472.5 474.8 475.1 473.8 477.7C472.8 480.4 471.8 483.2 470.8 486.2C469.8 489.1 468.9 492.1 468.0 495.3C467.1 498.5 467.7 496.3 465.4 505.2C463.0 514.2 455.9 541.5 454.0 548.8Z" fill="#ece9e4" stroke="none" stroke-linejoin="round"/>
<ellipse cx="233.6" cy="602" rx="113.7" ry="114.1" fill="#ece9e4" stroke="none"/>
<ellipse cx="476" cy="608" rx="97.0" ry="101.5" fill="#ece9e4" stroke="none"/>
<ellipse cx="340.3" cy="633.4" rx="96.0" ry="92.3" fill="#ece9e4" stroke="none"/>
<ellipse cx="720.3" cy="604.4" rx="116.8" ry="113.7" fill="#ece9e4" stroke="none"/>
<ellipse cx="959" cy="611" rx="97.0" ry="101.9" fill="#ece9e4" stroke="none"/>
<ellipse cx="823.55" cy="638.9" rx="95.0" ry="89.5" fill="#ece9e4" stroke="none"/>
<path d="M241.4 545.7C242.0 538.3 244.1 511.7 244.9 500.9C245.7 490.1 245.9 487.5 246.4 480.9C247.0 474.3 247.6 467.8 248.3 461.3C249.1 454.8 249.9 448.4 250.8 442.0C251.7 435.6 252.7 429.3 253.9 423.0C255.1 416.7 256.4 410.5 257.9 404.3C259.4 398.2 261.0 392.0 262.8 386.0C264.6 380.0 266.5 374.0 268.7 368.1C270.8 362.2 273.1 356.3 275.6 350.6C278.1 344.9 280.7 339.2 283.6 333.7C286.4 328.2 289.4 322.7 292.6 317.4C295.8 312.1 299.1 306.9 302.6 301.9C306.1 296.8 309.8 291.9 313.6 287.1C317.4 282.4 321.4 277.7 325.5 273.2C329.6 268.8 333.9 264.4 338.3 260.3C342.6 256.1 347.1 252.1 351.7 248.2C356.3 244.4 361.0 240.7 365.8 237.2C370.6 233.7 375.5 230.3 380.5 227.2C385.4 224.0 390.5 221.0 395.6 218.1C400.7 215.2 405.8 212.6 411.0 210.0C416.3 207.5 421.5 205.1 426.8 202.9C432.1 200.7 437.4 198.6 442.8 196.7C448.1 194.8 453.5 193.0 458.9 191.4C464.3 189.8 469.7 188.3 475.1 186.9C480.6 185.6 486.0 184.3 491.4 183.3C496.9 182.2 502.3 181.2 507.7 180.4C513.2 179.5 518.6 178.8 524.0 178.2C529.5 177.6 534.9 177.1 540.3 176.7C545.7 176.3 551.2 176.1 556.6 175.9C562.0 175.7 567.4 175.7 572.8 175.7C578.2 175.8 583.6 176.0 589.0 176.2C594.4 176.5 599.8 176.9 605.1 177.3C610.5 177.8 615.9 178.4 621.3 179.1C626.6 179.8 632.0 180.6 637.4 181.5C642.7 182.4 648.1 183.5 653.4 184.6C658.8 185.8 664.1 187.0 669.4 188.4C674.7 189.8 680.0 191.3 685.3 193.0C690.6 194.6 695.9 196.4 701.1 198.3C706.3 200.2 711.6 202.2 716.7 204.4C721.9 206.6 727.1 208.9 732.2 211.4C737.3 213.9 742.3 216.5 747.3 219.3C752.3 222.0 757.3 225.0 762.2 228.0C767.0 231.1 771.8 234.3 776.6 237.7C781.3 241.1 785.9 244.6 790.5 248.3C795.0 252.0 799.5 255.9 803.8 259.9C808.2 263.9 812.4 268.0 816.5 272.3C820.7 276.6 824.7 281.0 828.5 285.6C832.4 290.2 836.1 294.9 839.7 299.8C843.3 304.6 846.7 309.6 850.0 314.7C853.3 319.8 856.4 325.0 859.4 330.4C862.3 335.7 865.2 341.1 867.8 346.7C870.5 352.2 873.0 357.8 875.3 363.6C877.6 369.3 879.8 375.1 881.9 381.0C883.9 386.9 885.8 392.8 887.5 398.8C889.3 404.9 890.8 411.0 892.3 417.1C893.8 423.3 895.1 429.5 896.4 435.8C897.6 442.0 898.8 448.4 899.8 454.8C900.9 461.2 901.9 467.7 902.8 474.2C903.7 480.8 904.6 487.4 905.4 494.1C906.3 500.9 907.1 507.7 907.9 514.6C908.8 521.6 909.2 524.9 910.5 535.9C911.8 546.9 914.9 573.2 915.8 580.6L719.6 545.8C717.4 538.7 709.1 511.8 706.3 502.8C703.6 493.8 704.1 495.3 702.9 491.7C701.7 488.1 700.4 484.7 699.1 481.4C697.8 478.1 696.4 475.0 695.0 471.9C693.7 468.9 692.2 466.0 690.8 463.2C689.4 460.4 688.0 457.7 686.5 455.2C685.1 452.6 683.6 450.1 682.2 447.8C680.8 445.4 679.4 443.1 677.9 440.9C676.5 438.7 675.1 436.6 673.7 434.6C672.4 432.5 671.0 430.6 669.6 428.6C668.3 426.7 666.9 424.9 665.6 423.0C664.3 421.2 663.0 419.5 661.7 417.8C660.3 416.0 659.1 414.4 657.8 412.7C656.5 411.1 655.2 409.5 653.9 407.9C652.6 406.3 651.3 404.8 650.0 403.2C648.7 401.7 647.4 400.2 646.1 398.7C644.8 397.3 643.5 395.8 642.1 394.4C640.8 393.0 639.4 391.6 638.0 390.2C636.6 388.9 635.2 387.6 633.8 386.3C632.3 385.0 630.9 383.7 629.4 382.4C627.9 381.2 626.3 380.0 624.8 378.9C623.2 377.7 621.6 376.6 620.0 375.5C618.3 374.5 616.7 373.4 615.0 372.5C613.3 371.5 611.5 370.6 609.8 369.7C608.0 368.9 606.2 368.1 604.4 367.3C602.5 366.6 600.7 365.9 598.8 365.4C596.9 364.8 595.0 364.2 593.1 363.8C591.2 363.3 589.2 362.9 587.3 362.6C585.3 362.3 583.3 362.1 581.3 361.9C579.4 361.8 577.4 361.7 575.4 361.7C573.4 361.7 571.4 361.8 569.5 362.0C567.5 362.2 565.5 362.4 563.6 362.7C561.6 363.1 559.7 363.5 557.7 363.9C555.8 364.4 553.9 365.0 552.1 365.6C550.2 366.2 548.3 366.9 546.5 367.6C544.7 368.4 542.9 369.2 541.2 370.1C539.4 371.0 537.7 371.9 536.0 372.9C534.4 373.9 532.7 375.0 531.1 376.1C529.5 377.2 528.0 378.3 526.4 379.5C524.9 380.7 523.4 381.9 522.0 383.2C520.5 384.5 519.1 385.8 517.8 387.1C516.4 388.5 515.1 389.8 513.7 391.2C512.4 392.6 511.2 394.1 509.9 395.5C508.6 397.0 507.4 398.4 506.2 399.9C505.0 401.4 503.8 403.0 502.7 404.5C501.5 406.1 500.3 407.6 499.2 409.2C498.0 410.8 496.9 412.4 495.8 414.1C494.7 415.7 493.5 417.4 492.4 419.1C491.3 420.8 490.2 422.6 489.0 424.3C487.9 426.1 486.8 427.9 485.6 429.8C484.5 431.7 483.3 433.6 482.2 435.6C481.0 437.5 479.9 439.5 478.7 441.6C477.5 443.7 476.4 445.9 475.2 448.1C474.0 450.4 472.9 452.7 471.7 455.1C470.5 457.5 469.4 459.9 468.2 462.5C467.1 465.1 466.0 467.8 464.9 470.5C463.8 473.3 462.7 476.2 461.7 479.2C460.7 482.2 459.7 485.3 458.7 488.5C457.8 491.7 456.9 495.0 456.2 498.5C455.4 501.9 454.7 505.5 454.1 509.1C453.5 512.8 453.8 511.2 452.6 520.5C451.4 529.8 447.7 557.7 446.8 565.1Z" fill="#d5686e" stroke="#2e2e2e" stroke-width="1" stroke-linejoin="round"/>
<path d="M284.1 557.1C285.4 549.7 290.3 523.1 292.2 512.8C294.1 502.5 294.4 501.0 295.4 495.3C296.5 489.6 297.5 484.0 298.5 478.5C299.5 473.0 300.5 467.6 301.6 462.2C302.6 456.9 303.7 451.6 304.8 446.4C306.0 441.2 307.1 436.0 308.4 430.9C309.6 425.8 310.9 420.8 312.3 415.8C313.7 410.8 315.2 405.9 316.8 401.1C318.4 396.2 320.1 391.4 321.9 386.6C323.8 381.9 325.7 377.2 327.7 372.6C329.8 368.0 331.9 363.4 334.2 359.0C336.5 354.5 338.9 350.1 341.4 345.9C343.9 341.6 346.6 337.4 349.3 333.3C352.1 329.2 355.0 325.2 358.0 321.3C361.0 317.4 364.1 313.6 367.3 309.9C370.5 306.2 373.8 302.7 377.3 299.2C380.7 295.8 384.2 292.5 387.8 289.3C391.4 286.1 395.1 283.0 398.8 280.1C402.6 277.1 406.4 274.3 410.3 271.6C414.2 268.9 418.2 266.4 422.2 263.9C426.3 261.5 430.3 259.2 434.5 257.0C438.6 254.9 442.7 252.8 446.9 250.9C451.1 248.9 455.4 247.1 459.6 245.5C463.9 243.8 468.2 242.2 472.5 240.8C476.8 239.3 481.1 238.0 485.4 236.7C489.8 235.5 494.1 234.4 498.5 233.4C502.8 232.4 507.2 231.5 511.5 230.7C515.9 229.9 520.2 229.2 524.6 228.6C529.0 228.0 533.3 227.5 537.7 227.0C542.0 226.6 546.4 226.3 550.7 226.1C555.1 225.8 559.4 225.7 563.8 225.6C568.1 225.6 572.4 225.6 576.8 225.7C581.1 225.8 585.4 226.0 589.7 226.3C594.0 226.6 598.4 227.0 602.7 227.4C607.0 227.9 611.3 228.4 615.5 229.1C619.8 229.7 624.1 230.4 628.4 231.2C632.7 232.0 636.9 232.9 641.2 233.9C645.4 234.9 649.7 236.0 653.9 237.2C658.1 238.4 662.3 239.7 666.5 241.1C670.7 242.5 674.9 243.9 679.0 245.5C683.2 247.1 687.3 248.8 691.4 250.6C695.5 252.5 699.6 254.4 703.6 256.4C707.6 258.4 711.6 260.6 715.6 262.8C719.5 265.1 723.4 267.4 727.3 269.9C731.1 272.4 734.9 275.0 738.7 277.7C742.4 280.4 746.1 283.3 749.7 286.2C753.3 289.2 756.8 292.2 760.2 295.4C763.7 298.6 767.1 301.9 770.3 305.3C773.6 308.6 776.8 312.2 779.9 315.8C783.0 319.4 786.0 323.1 788.9 326.9C791.8 330.7 794.7 334.6 797.4 338.6C800.1 342.6 802.7 346.7 805.2 350.9C807.7 355.1 810.0 359.4 812.3 363.7C814.6 368.0 816.8 372.5 818.9 377.0C821.0 381.4 823.0 386.0 824.9 390.6C826.8 395.3 828.6 400.0 830.3 404.7C832.0 409.5 833.7 414.3 835.3 419.2C836.9 424.1 838.4 429.1 839.8 434.1C841.3 439.2 842.7 444.2 844.1 449.4C845.5 454.6 846.9 459.9 848.3 465.2C849.6 470.6 849.9 471.6 852.4 481.6C854.9 491.6 861.5 518.0 863.3 525.3L812.0 533.6C809.9 526.4 802.2 499.9 799.4 490.4C796.7 481.0 796.8 481.2 795.4 476.8C794.1 472.3 792.7 468.0 791.3 463.7C790.0 459.5 788.5 455.4 787.1 451.3C785.7 447.2 784.2 443.2 782.7 439.3C781.2 435.4 779.6 431.6 778.0 427.8C776.5 424.1 774.8 420.4 773.2 416.8C771.5 413.2 769.8 409.6 768.0 406.1C766.2 402.7 764.4 399.2 762.6 395.9C760.7 392.5 758.8 389.3 756.8 386.0C754.8 382.8 752.8 379.7 750.8 376.6C748.7 373.5 746.6 370.5 744.4 367.6C742.2 364.6 740.0 361.7 737.7 358.9C735.4 356.1 733.1 353.4 730.7 350.7C728.3 348.0 725.9 345.4 723.4 342.9C720.9 340.4 718.4 337.9 715.8 335.5C713.3 333.1 710.6 330.8 708.0 328.6C705.3 326.3 702.6 324.2 699.9 322.1C697.2 320.0 694.4 318.0 691.6 316.0C688.8 314.1 685.9 312.2 683.0 310.4C680.1 308.6 677.2 306.9 674.3 305.2C671.4 303.6 668.4 302.0 665.4 300.5C662.4 299.0 659.4 297.6 656.3 296.2C653.3 294.9 650.2 293.6 647.1 292.3C644.0 291.1 640.9 290.0 637.7 288.9C634.6 287.8 631.5 286.8 628.3 285.9C625.1 285.0 621.9 284.1 618.7 283.3C615.5 282.5 612.3 281.8 609.0 281.2C605.8 280.5 602.6 280.0 599.3 279.4C596.0 278.9 592.8 278.5 589.5 278.1C586.2 277.8 582.9 277.5 579.6 277.3C576.3 277.1 572.9 276.9 569.6 276.8C566.3 276.8 563.0 276.8 559.6 276.9C556.3 276.9 552.9 277.1 549.6 277.3C546.2 277.6 542.9 277.9 539.5 278.2C536.2 278.6 532.8 279.1 529.4 279.7C526.1 280.2 522.7 280.8 519.4 281.6C516.0 282.3 512.7 283.1 509.3 284.0C506.0 284.8 502.7 285.8 499.4 286.9C496.1 287.9 492.7 289.1 489.5 290.3C486.2 291.6 482.9 292.9 479.7 294.3C476.4 295.7 473.2 297.2 470.0 298.9C466.8 300.5 463.7 302.2 460.5 303.9C457.4 305.7 454.3 307.6 451.3 309.6C448.2 311.6 445.2 313.6 442.3 315.8C439.3 318.0 436.4 320.2 433.5 322.6C430.7 324.9 427.8 327.4 425.1 329.9C422.3 332.4 419.7 335.0 417.0 337.7C414.4 340.4 411.8 343.2 409.3 346.1C406.9 349.0 404.4 351.9 402.1 355.0C399.7 358.0 397.5 361.1 395.3 364.3C393.1 367.5 390.9 370.8 388.9 374.1C386.8 377.5 384.9 380.9 383.0 384.3C381.1 387.8 379.3 391.4 377.6 395.0C375.8 398.6 374.2 402.3 372.6 406.0C371.1 409.7 369.6 413.5 368.2 417.4C366.7 421.2 365.4 425.1 364.1 429.1C362.9 433.1 361.7 437.1 360.5 441.2C359.4 445.3 358.4 449.4 357.3 453.6C356.3 457.8 355.4 462.1 354.5 466.4C353.6 470.7 353.8 470.0 352.0 479.6C350.1 489.1 344.9 516.4 343.5 523.8Z" fill="#e59f4f" stroke="#2e2e2e" stroke-width="1" stroke-linejoin="round"/>
<path d="M343.5 523.8C344.9 516.4 350.1 489.1 352.0 479.6C353.8 470.0 353.6 470.7 354.5 466.4C355.4 462.1 356.3 457.8 357.3 453.6C358.4 449.4 359.4 445.3 360.5 441.2C361.7 437.1 362.9 433.1 364.1 429.1C365.4 425.1 366.7 421.2 368.2 417.4C369.6 413.5 371.1 409.7 372.6 406.0C374.2 402.3 375.8 398.6 377.6 395.0C379.3 391.4 381.1 387.8 383.0 384.3C384.9 380.9 386.8 377.5 388.9 374.1C390.9 370.8 393.1 367.5 395.3 364.3C397.5 361.1 399.7 358.0 402.1 355.0C404.4 351.9 406.9 349.0 409.3 346.1C411.8 343.2 414.4 340.4 417.0 337.7C419.7 335.0 422.3 332.4 425.1 329.9C427.8 327.4 430.7 324.9 433.5 322.6C436.4 320.2 439.3 318.0 442.3 315.8C445.2 313.6 448.2 311.6 451.3 309.6C454.3 307.6 457.4 305.7 460.5 303.9C463.7 302.2 466.8 300.5 470.0 298.9C473.2 297.2 476.4 295.7 479.7 294.3C482.9 292.9 486.2 291.6 489.5 290.3C492.7 289.1 496.1 287.9 499.4 286.9C502.7 285.8 506.0 284.8 509.3 284.0C512.7 283.1 516.0 282.3 519.4 281.6C522.7 280.8 526.1 280.2 529.4 279.7C532.8 279.1 536.2 278.6 539.5 278.2C542.9 277.9 546.2 277.6 549.6 277.3C552.9 277.1 556.3 276.9 559.6 276.9C563.0 276.8 566.3 276.8 569.6 276.8C572.9 276.9 576.3 277.1 579.6 277.3C582.9 277.5 586.2 277.8 589.5 278.1C592.8 278.5 596.0 278.9 599.3 279.4C602.6 280.0 605.8 280.5 609.0 281.2C612.3 281.8 615.5 282.5 618.7 283.3C621.9 284.1 625.1 285.0 628.3 285.9C631.5 286.8 634.6 287.8 637.7 288.9C640.9 290.0 644.0 291.1 647.1 292.3C650.2 293.6 653.3 294.9 656.3 296.2C659.4 297.6 662.4 299.0 665.4 300.5C668.4 302.0 671.4 303.6 674.3 305.2C677.2 306.9 680.1 308.6 683.0 310.4C685.9 312.2 688.8 314.1 691.6 316.0C694.4 318.0 697.2 320.0 699.9 322.1C702.6 324.2 705.3 326.3 708.0 328.6C710.6 330.8 713.3 333.1 715.8 335.5C718.4 337.9 720.9 340.4 723.4 342.9C725.9 345.4 728.3 348.0 730.7 350.7C733.1 353.4 735.4 356.1 737.7 358.9C740.0 361.7 742.2 364.6 744.4 367.6C746.6 370.5 748.7 373.5 750.8 376.6C752.8 379.7 754.8 382.8 756.8 386.0C758.8 389.3 760.7 392.5 762.6 395.9C764.4 399.2 766.2 402.7 768.0 406.1C769.8 409.6 771.5 413.2 773.2 416.8C774.8 420.4 776.5 424.1 778.0 427.8C779.6 431.6 781.2 435.4 782.7 439.3C784.2 443.2 785.7 447.2 787.1 451.3C788.5 455.4 790.0 459.5 791.3 463.7C792.7 468.0 794.1 472.3 795.4 476.8C796.8 481.2 796.7 481.0 799.4 490.4C802.2 499.9 809.9 526.4 812.0 533.6L775.9 559.1C774.4 551.7 769.2 524.5 767.3 514.9C765.4 505.3 765.6 505.8 764.7 501.4C763.7 496.9 762.7 492.7 761.6 488.5C760.5 484.3 759.4 480.2 758.2 476.2C757.0 472.3 755.7 468.4 754.4 464.6C753.2 460.8 751.8 457.1 750.4 453.5C749.0 449.9 747.6 446.4 746.1 443.0C744.7 439.6 743.2 436.2 741.6 433.0C740.1 429.7 738.5 426.5 736.9 423.4C735.3 420.3 733.6 417.2 731.9 414.3C730.3 411.3 728.5 408.4 726.8 405.5C725.0 402.7 723.3 399.9 721.5 397.2C719.6 394.5 717.8 391.8 715.9 389.3C714.1 386.7 712.1 384.1 710.2 381.7C708.3 379.2 706.3 376.8 704.3 374.4C702.3 372.1 700.2 369.8 698.2 367.5C696.1 365.3 694.0 363.1 691.8 361.0C689.7 358.9 687.5 356.8 685.3 354.8C683.1 352.8 680.9 350.8 678.6 348.9C676.3 347.0 674.0 345.2 671.6 343.4C669.3 341.7 666.9 340.0 664.5 338.3C662.1 336.7 659.6 335.1 657.1 333.6C654.6 332.1 652.1 330.7 649.6 329.3C647.0 327.9 644.5 326.6 641.8 325.4C639.2 324.1 636.6 323.0 633.9 321.9C631.3 320.8 628.6 319.8 625.9 318.8C623.2 317.9 620.4 317.0 617.7 316.2C614.9 315.4 612.2 314.7 609.4 314.1C606.6 313.4 603.8 312.9 601.0 312.4C598.2 311.9 595.3 311.5 592.5 311.2C589.7 310.9 586.8 310.7 584.0 310.6C581.1 310.4 578.3 310.3 575.4 310.4C572.6 310.4 569.7 310.5 566.9 310.7C564.0 310.8 561.2 311.1 558.4 311.5C555.5 311.8 552.7 312.2 549.9 312.7C547.1 313.2 544.3 313.8 541.6 314.5C538.8 315.2 536.0 315.9 533.3 316.7C530.6 317.6 527.9 318.5 525.2 319.4C522.5 320.4 519.8 321.5 517.2 322.6C514.6 323.7 512.0 324.9 509.4 326.2C506.8 327.4 504.3 328.8 501.8 330.2C499.3 331.6 496.8 333.1 494.4 334.6C491.9 336.1 489.5 337.7 487.2 339.4C484.8 341.1 482.5 342.8 480.2 344.6C477.9 346.4 475.6 348.2 473.4 350.1C471.2 352.0 469.0 354.0 466.9 356.0C464.7 358.0 462.6 360.1 460.5 362.2C458.5 364.4 456.4 366.6 454.4 368.8C452.4 371.0 450.5 373.3 448.6 375.7C446.6 378.0 444.7 380.4 442.9 382.9C441.0 385.4 439.2 387.9 437.4 390.5C435.7 393.0 433.9 395.7 432.2 398.3C430.5 401.0 428.8 403.8 427.2 406.6C425.5 409.4 423.9 412.2 422.3 415.2C420.8 418.1 419.2 421.1 417.7 424.2C416.2 427.2 414.7 430.3 413.3 433.5C411.9 436.7 410.5 440.0 409.1 443.4C407.7 446.7 406.4 450.1 405.2 453.6C403.9 457.1 402.6 460.7 401.5 464.4C400.3 468.1 399.1 471.8 398.1 475.7C397.0 479.5 397.4 478.3 395.0 487.5C392.6 496.8 385.5 523.8 383.6 531.1Z" fill="#edcb6a" stroke="#2e2e2e" stroke-width="1" stroke-linejoin="round"/>
<path d="M383.6 531.1C385.5 523.8 392.6 496.8 395.0 487.5C397.4 478.3 397.0 479.5 398.1 475.7C399.1 471.8 400.3 468.1 401.5 464.4C402.6 460.7 403.9 457.1 405.2 453.6C406.4 450.1 407.7 446.7 409.1 443.4C410.5 440.0 411.9 436.7 413.3 433.5C414.7 430.3 416.2 427.2 417.7 424.2C419.2 421.1 420.8 418.1 422.3 415.2C423.9 412.2 425.5 409.4 427.2 406.6C428.8 403.8 430.5 401.0 432.2 398.3C433.9 395.7 435.7 393.0 437.4 390.5C439.2 387.9 441.0 385.4 442.9 382.9C444.7 380.4 446.6 378.0 448.6 375.7C450.5 373.3 452.4 371.0 454.4 368.8C456.4 366.6 458.5 364.4 460.5 362.2C462.6 360.1 464.7 358.0 466.9 356.0C469.0 354.0 471.2 352.0 473.4 350.1C475.6 348.2 477.9 346.4 480.2 344.6C482.5 342.8 484.8 341.1 487.2 339.4C489.5 337.7 491.9 336.1 494.4 334.6C496.8 333.1 499.3 331.6 501.8 330.2C504.3 328.8 506.8 327.4 509.4 326.2C512.0 324.9 514.6 323.7 517.2 322.6C519.8 321.5 522.5 320.4 525.2 319.4C527.9 318.5 530.6 317.6 533.3 316.7C536.0 315.9 538.8 315.2 541.6 314.5C544.3 313.8 547.1 313.2 549.9 312.7C552.7 312.2 555.5 311.8 558.4 311.5C561.2 311.1 564.0 310.8 566.9 310.7C569.7 310.5 572.6 310.4 575.4 310.4C578.3 310.3 581.1 310.4 584.0 310.6C586.8 310.7 589.7 310.9 592.5 311.2C595.3 311.5 598.2 311.9 601.0 312.4C603.8 312.9 606.6 313.4 609.4 314.1C612.2 314.7 614.9 315.4 617.7 316.2C620.4 317.0 623.2 317.9 625.9 318.8C628.6 319.8 631.3 320.8 633.9 321.9C636.6 323.0 639.2 324.1 641.8 325.4C644.5 326.6 647.0 327.9 649.6 329.3C652.1 330.7 654.6 332.1 657.1 333.6C659.6 335.1 662.1 336.7 664.5 338.3C666.9 340.0 669.3 341.7 671.6 343.4C674.0 345.2 676.3 347.0 678.6 348.9C680.9 350.8 683.1 352.8 685.3 354.8C687.5 356.8 689.7 358.9 691.8 361.0C694.0 363.1 696.1 365.3 698.2 367.5C700.2 369.8 702.3 372.1 704.3 374.4C706.3 376.8 708.3 379.2 710.2 381.7C712.1 384.1 714.1 386.7 715.9 389.3C717.8 391.8 719.6 394.5 721.5 397.2C723.3 399.9 725.0 402.7 726.8 405.5C728.5 408.4 730.3 411.3 731.9 414.3C733.6 417.2 735.3 420.3 736.9 423.4C738.5 426.5 740.1 429.7 741.6 433.0C743.2 436.2 744.7 439.6 746.1 443.0C747.6 446.4 749.0 449.9 750.4 453.5C751.8 457.1 753.2 460.8 754.4 464.6C755.7 468.4 757.0 472.3 758.2 476.2C759.4 480.2 760.5 484.3 761.6 488.5C762.7 492.7 763.7 496.9 764.7 501.4C765.6 505.8 765.4 505.3 767.3 514.9C769.2 524.5 774.4 551.7 775.9 559.1L748.1 545.9C745.9 538.8 737.9 512.0 735.1 502.8C732.4 493.6 732.8 494.7 731.5 490.8C730.2 486.9 728.8 483.1 727.4 479.4C726.0 475.8 724.5 472.3 723.0 468.9C721.5 465.5 720.0 462.2 718.4 459.0C716.8 455.8 715.2 452.8 713.6 449.8C712.0 446.9 710.4 444.0 708.8 441.3C707.2 438.5 705.6 435.9 703.9 433.3C702.3 430.7 700.7 428.2 699.1 425.8C697.5 423.3 695.9 421.0 694.3 418.7C692.7 416.4 691.1 414.2 689.5 412.0C687.9 409.8 686.3 407.7 684.7 405.6C683.1 403.5 681.6 401.5 680.0 399.5C678.4 397.5 676.8 395.5 675.2 393.6C673.6 391.7 672.1 389.8 670.4 388.0C668.8 386.1 667.2 384.3 665.6 382.5C663.9 380.8 662.3 379.0 660.6 377.3C658.9 375.6 657.2 373.9 655.5 372.3C653.8 370.6 652.0 369.0 650.2 367.4C648.4 365.9 646.6 364.3 644.7 362.9C642.9 361.4 641.0 359.9 639.0 358.5C637.1 357.1 635.1 355.8 633.1 354.5C631.1 353.2 629.1 352.0 627.0 350.8C624.9 349.6 622.8 348.5 620.6 347.5C618.5 346.4 616.3 345.4 614.1 344.5C611.8 343.6 609.6 342.8 607.3 342.0C605.0 341.3 602.7 340.6 600.4 340.0C598.0 339.4 595.7 338.9 593.3 338.4C590.9 338.0 588.5 337.7 586.1 337.4C583.7 337.2 581.3 337.0 578.9 336.9C576.4 336.8 574.0 336.8 571.6 336.9C569.2 337.0 566.8 337.2 564.4 337.5C562.0 337.8 559.6 338.1 557.2 338.6C554.8 339.1 552.5 339.6 550.1 340.2C547.8 340.8 545.5 341.5 543.2 342.3C541.0 343.1 538.7 344.0 536.5 344.9C534.3 345.8 532.1 346.8 530.0 347.9C527.8 349.0 525.7 350.1 523.7 351.3C521.6 352.5 519.6 353.8 517.6 355.1C515.7 356.5 513.7 357.8 511.8 359.3C509.9 360.7 508.1 362.2 506.3 363.7C504.4 365.2 502.7 366.8 500.9 368.4C499.2 370.0 497.5 371.6 495.8 373.3C494.2 375.0 492.5 376.7 490.9 378.4C489.3 380.2 487.7 382.0 486.2 383.8C484.6 385.6 483.1 387.4 481.6 389.3C480.1 391.2 478.6 393.1 477.1 395.0C475.6 396.9 474.2 398.9 472.7 400.9C471.3 402.9 469.8 405.0 468.4 407.0C466.9 409.1 465.5 411.2 464.1 413.4C462.6 415.6 461.2 417.8 459.8 420.1C458.3 422.3 456.9 424.7 455.5 427.1C454.0 429.4 452.6 431.9 451.2 434.4C449.8 436.9 448.3 439.5 446.9 442.2C445.5 444.9 444.1 447.6 442.7 450.5C441.3 453.3 440.0 456.3 438.6 459.3C437.3 462.3 436.0 465.4 434.7 468.7C433.4 471.9 432.2 475.2 431.0 478.7C429.9 482.1 428.7 485.7 427.7 489.4C426.7 493.0 425.7 496.8 424.8 500.7C423.9 504.6 424.3 503.3 422.5 512.6C420.7 522.0 415.3 549.5 413.9 556.8Z" fill="#adcb4b" stroke="#2e2e2e" stroke-width="1" stroke-linejoin="round"/>
<path d="M413.9 556.8C415.3 549.5 420.7 522.0 422.5 512.6C424.3 503.3 423.9 504.6 424.8 500.7C425.7 496.8 426.7 493.0 427.7 489.4C428.7 485.7 429.9 482.1 431.0 478.7C432.2 475.2 433.4 471.9 434.7 468.7C436.0 465.4 437.3 462.3 438.6 459.3C440.0 456.3 441.3 453.3 442.7 450.5C444.1 447.6 445.5 444.9 446.9 442.2C448.3 439.5 449.8 436.9 451.2 434.4C452.6 431.9 454.0 429.4 455.5 427.1C456.9 424.7 458.3 422.3 459.8 420.1C461.2 417.8 462.6 415.6 464.1 413.4C465.5 411.2 466.9 409.1 468.4 407.0C469.8 405.0 471.3 402.9 472.7 400.9C474.2 398.9 475.6 396.9 477.1 395.0C478.6 393.1 480.1 391.2 481.6 389.3C483.1 387.4 484.6 385.6 486.2 383.8C487.7 382.0 489.3 380.2 490.9 378.4C492.5 376.7 494.2 375.0 495.8 373.3C497.5 371.6 499.2 370.0 500.9 368.4C502.7 366.8 504.4 365.2 506.3 363.7C508.1 362.2 509.9 360.7 511.8 359.3C513.7 357.8 515.7 356.5 517.6 355.1C519.6 353.8 521.6 352.5 523.7 351.3C525.7 350.1 527.8 349.0 530.0 347.9C532.1 346.8 534.3 345.8 536.5 344.9C538.7 344.0 541.0 343.1 543.2 342.3C545.5 341.5 547.8 340.8 550.1 340.2C552.5 339.6 554.8 339.1 557.2 338.6C559.6 338.1 562.0 337.8 564.4 337.5C566.8 337.2 569.2 337.0 571.6 336.9C574.0 336.8 576.4 336.8 578.9 336.9C581.3 337.0 583.7 337.2 586.1 337.4C588.5 337.7 590.9 338.0 593.3 338.4C595.7 338.9 598.0 339.4 600.4 340.0C602.7 340.6 605.0 341.3 607.3 342.0C609.6 342.8 611.8 343.6 614.1 344.5C616.3 345.4 618.5 346.4 620.6 347.5C622.8 348.5 624.9 349.6 627.0 350.8C629.1 352.0 631.1 353.2 633.1 354.5C635.1 355.8 637.1 357.1 639.0 358.5C641.0 359.9 642.9 361.4 644.7 362.9C646.6 364.3 648.4 365.9 650.2 367.4C652.0 369.0 653.8 370.6 655.5 372.3C657.2 373.9 658.9 375.6 660.6 377.3C662.3 379.0 663.9 380.8 665.6 382.5C667.2 384.3 668.8 386.1 670.4 388.0C672.1 389.8 673.6 391.7 675.2 393.6C676.8 395.5 678.4 397.5 680.0 399.5C681.6 401.5 683.1 403.5 684.7 405.6C686.3 407.7 687.9 409.8 689.5 412.0C691.1 414.2 692.7 416.4 694.3 418.7C695.9 421.0 697.5 423.3 699.1 425.8C700.7 428.2 702.3 430.7 703.9 433.3C705.6 435.9 707.2 438.5 708.8 441.3C710.4 444.0 712.0 446.9 713.6 449.8C715.2 452.8 716.8 455.8 718.4 459.0C720.0 462.2 721.5 465.5 723.0 468.9C724.5 472.3 726.0 475.8 727.4 479.4C728.8 483.1 730.2 486.9 731.5 490.8C732.8 494.7 732.4 493.6 735.1 502.8C737.9 512.0 745.9 538.8 748.1 545.9L719.6 545.8C717.4 538.7 709.1 511.8 706.3 502.8C703.6 493.8 704.1 495.3 702.9 491.7C701.7 488.1 700.4 484.7 699.1 481.4C697.8 478.1 696.4 475.0 695.0 471.9C693.7 468.9 692.2 466.0 690.8 463.2C689.4 460.4 688.0 457.7 686.5 455.2C685.1 452.6 683.6 450.1 682.2 447.8C680.8 445.4 679.4 443.1 677.9 440.9C676.5 438.7 675.1 436.6 673.7 434.6C672.4 432.5 671.0 430.6 669.6 428.6C668.3 426.7 666.9 424.9 665.6 423.0C664.3 421.2 663.0 419.5 661.7 417.8C660.3 416.0 659.1 414.4 657.8 412.7C656.5 411.1 655.2 409.5 653.9 407.9C652.6 406.3 651.3 404.8 650.0 403.2C648.7 401.7 647.4 400.2 646.1 398.7C644.8 397.3 643.5 395.8 642.1 394.4C640.8 393.0 639.4 391.6 638.0 390.2C636.6 388.9 635.2 387.6 633.8 386.3C632.3 385.0 630.9 383.7 629.4 382.4C627.9 381.2 626.3 380.0 624.8 378.9C623.2 377.7 621.6 376.6 620.0 375.5C618.3 374.5 616.7 373.4 615.0 372.5C613.3 371.5 611.5 370.6 609.8 369.7C608.0 368.9 606.2 368.1 604.4 367.3C602.5 366.6 600.7 365.9 598.8 365.4C596.9 364.8 595.0 364.2 593.1 363.8C591.2 363.3 589.2 362.9 587.3 362.6C585.3 362.3 583.3 362.1 581.3 361.9C579.4 361.8 577.4 361.7 575.4 361.7C573.4 361.7 571.4 361.8 569.5 362.0C567.5 362.2 565.5 362.4 563.6 362.7C561.6 363.1 559.7 363.5 557.7 363.9C555.8 364.4 553.9 365.0 552.1 365.6C550.2 366.2 548.3 366.9 546.5 367.6C544.7 368.4 542.9 369.2 541.2 370.1C539.4 371.0 537.7 371.9 536.0 372.9C534.4 373.9 532.7 375.0 531.1 376.1C529.5 377.2 528.0 378.3 526.4 379.5C524.9 380.7 523.4 381.9 522.0 383.2C520.5 384.5 519.1 385.8 517.8 387.1C516.4 388.5 515.1 389.8 513.7 391.2C512.4 392.6 511.2 394.1 509.9 395.5C508.6 397.0 507.4 398.4 506.2 399.9C505.0 401.4 503.8 403.0 502.7 404.5C501.5 406.1 500.3 407.6 499.2 409.2C498.0 410.8 496.9 412.4 495.8 414.1C494.7 415.7 493.5 417.4 492.4 419.1C491.3 420.8 490.2 422.6 489.0 424.3C487.9 426.1 486.8 427.9 485.6 429.8C484.5 431.7 483.3 433.6 482.2 435.6C481.0 437.5 479.9 439.5 478.7 441.6C477.5 443.7 476.4 445.9 475.2 448.1C474.0 450.4 472.9 452.7 471.7 455.1C470.5 457.5 469.4 459.9 468.2 462.5C467.1 465.1 466.0 467.8 464.9 470.5C463.8 473.3 462.7 476.2 461.7 479.2C460.7 482.2 459.7 485.3 458.7 488.5C457.8 491.7 456.9 495.0 456.2 498.5C455.4 501.9 454.7 505.5 454.1 509.1C453.5 512.8 453.8 511.2 452.6 520.5C451.4 529.8 447.7 557.7 446.8 565.1Z" fill="#a2d1c6" stroke="#2e2e2e" stroke-width="1" stroke-linejoin="round"/>
<path d="M346.3 509.0C347.2 504.1 350.6 486.7 352.0 479.6C353.3 472.5 353.6 470.7 354.5 466.4C355.4 462.1 356.3 457.8 357.3 453.6C358.4 449.4 359.4 445.3 360.5 441.2C361.7 437.1 362.9 433.1 364.1 429.1C365.4 425.1 366.7 421.2 368.2 417.4C369.6 413.5 371.1 409.7 372.6 406.0C374.2 402.3 375.8 398.6 377.6 395.0C379.3 391.4 381.1 387.8 383.0 384.3C384.9 380.9 386.8 377.5 388.9 374.1C390.9 370.8 393.1 367.5 395.3 364.3C397.5 361.1 399.7 358.0 402.1 355.0C404.4 351.9 406.9 349.0 409.3 346.1C411.8 343.2 414.4 340.4 417.0 337.7C419.7 335.0 422.3 332.4 425.1 329.9C427.8 327.4 430.7 324.9 433.5 322.6C436.4 320.2 439.3 318.0 442.3 315.8C445.2 313.6 448.2 311.6 451.3 309.6C454.3 307.6 457.4 305.7 460.5 303.9C463.7 302.2 466.8 300.5 470.0 298.9C473.2 297.2 476.4 295.7 479.7 294.3C482.9 292.9 486.2 291.6 489.5 290.3C492.7 289.1 497.7 287.5 499.4 286.9" fill="none" stroke="#1e1a14" stroke-width="2.1"/>
<path d="M489.5 290.3C491.1 289.8 496.1 287.9 499.4 286.9C502.7 285.8 506.0 284.8 509.3 284.0C512.7 283.1 516.0 282.3 519.4 281.6C522.7 280.8 526.1 280.2 529.4 279.7C532.8 279.1 536.2 278.6 539.5 278.2C542.9 277.9 546.2 277.6 549.6 277.3C552.9 277.1 557.9 276.9 559.6 276.9" fill="none" stroke="#2a2620" stroke-width="1.5"/>
<ellipse cx="239.9" cy="602.4" rx="101.3" ry="101.6" fill="#f4f3ef" stroke="#2e2e2e" stroke-width="2.1"/>
<ellipse cx="358" cy="557" rx="76.5" ry="76.5" fill="#f4f3ef" stroke="#2e2e2e" stroke-width="2.1"/>
<ellipse cx="478" cy="609" rx="89.0" ry="89.5" fill="#f4f3ef" stroke="#2e2e2e" stroke-width="2.1"/>
<ellipse cx="345.9" cy="621" rx="88.6" ry="92.8" fill="#f4f3ef" stroke="#2e2e2e" stroke-width="2.1"/>
<ellipse cx="719.4" cy="604.5" rx="101.1" ry="100.8" fill="#f4f3ef" stroke="#2e2e2e" stroke-width="2.1"/>
<ellipse cx="837" cy="558.5" rx="75.0" ry="75.0" fill="#f4f3ef" stroke="#2e2e2e" stroke-width="2.1"/>
<ellipse cx="958" cy="609.75" rx="87.5" ry="89.5" fill="#f4f3ef" stroke="#2e2e2e" stroke-width="2.1"/>
<ellipse cx="825.5" cy="635.6" rx="83.5" ry="79.5" fill="#f4f3ef" stroke="#2e2e2e" stroke-width="2.1"/>
<ellipse cx="239.9" cy="602.4" rx="101.3" ry="101.6" fill="#f4f3ef" stroke="none"/>
<ellipse cx="358" cy="557" rx="76.5" ry="76.5" fill="#f4f3ef" stroke="none"/>
<ellipse cx="478" cy="609" rx="89.0" ry="89.5" fill="#f4f3ef" stroke="none"/>
<ellipse cx="345.9" cy="621" rx="88.6" ry="92.8" fill="#f4f3ef" stroke="none"/>
<ellipse cx="719.4" cy="604.5" rx="101.1" ry="100.8" fill="#f4f3ef" stroke="none"/>
<ellipse cx="837" cy="558.5" rx="75.0" ry="75.0" fill="#f4f3ef" stroke="none"/>
<ellipse cx="958" cy="609.75" rx="87.5" ry="89.5" fill="#f4f3ef" stroke="none"/>
<ellipse cx="825.5" cy="635.6" rx="83.5" ry="79.5" fill="#f4f3ef" stroke="none"/>
<path d="M158.3 587.5 A94.5 94.5 0 0 1 298.2 534.6 A68.4 68.4 0 0 1 419.4 542.6 A75.3 75.3 0 0 0 296.5 549.4 A99.4 99.4 0 0 0 158.3 587.5Z" fill="#ffffff" stroke="#2e2e2e" stroke-width="1" stroke-linejoin="miter" stroke-miterlimit="8"/>
<path d="M637.4 589.1 A94.3 94.3 0 0 1 776.5 536.3 A68.6 68.6 0 0 1 897.7 543.4 A75.9 75.9 0 0 0 775.7 550.5 A99.4 99.4 0 0 0 637.4 589.1Z" fill="#ffffff" stroke="#2e2e2e" stroke-width="1" stroke-linejoin="miter" stroke-miterlimit="8"/>
<circle cx="289.9" cy="595.8" r="5.7" fill="#7a5f43" stroke="#2e2e2e" stroke-width="1"/><circle cx="392" cy="596.5" r="5.7" fill="#7a5f43" stroke="#2e2e2e" stroke-width="1"/><ellipse cx="284.3" cy="628.9" rx="18.8" ry="16.8" fill="#e9b4b6" stroke="#2e2e2e" stroke-width="1"/><ellipse cx="405.1" cy="628.9" rx="18.8" ry="16.8" fill="#e9b4b6" stroke="#2e2e2e" stroke-width="1"/><path d="M322.8 633.4 C324.0 652.4 332.7 659.4 342.2 659.4 C351.7 659.4 359.2 652.4 360.4 632.8" fill="none" stroke="#2e2e2e" stroke-width="5.6" stroke-linecap="round"/><path d="M322.8 633.4 C324.0 652.4 332.7 659.4 342.2 659.4 C351.7 659.4 359.2 652.4 360.4 632.8" fill="none" stroke="#7a5f43" stroke-width="3.7" stroke-linecap="round"/>
<circle cx="768.8" cy="597.2" r="5.7" fill="#7a5f43" stroke="#2e2e2e" stroke-width="1"/><circle cx="870.9" cy="597.9" r="5.7" fill="#7a5f43" stroke="#2e2e2e" stroke-width="1"/><ellipse cx="756" cy="631.8" rx="18.8" ry="16.8" fill="#e9b4b6" stroke="#2e2e2e" stroke-width="1"/><ellipse cx="879.7" cy="631.6" rx="18.8" ry="16.8" fill="#e9b4b6" stroke="#2e2e2e" stroke-width="1"/><path d="M802 635.2 C803.2 653.8 811.9 660.8 821.4 660.8 C830.9 660.8 838.0 653.8 839.2 634" fill="none" stroke="#2e2e2e" stroke-width="5.6" stroke-linecap="round"/><path d="M802 635.2 C803.2 653.8 811.9 660.8 821.4 660.8 C830.9 660.8 838.0 653.8 839.2 634" fill="none" stroke="#7a5f43" stroke-width="3.7" stroke-linecap="round"/>
<rect x="119.7" y="160.2" width="936.9" height="569.2" fill="none" stroke="#8ea6dd" stroke-width="1.3"/>
<path d="M588.4 422v44.6" stroke="#c9c9c9" stroke-width="2.2"/><path d="M565.6 444.600h45" stroke="#c9c9c9" stroke-width="1.4"/>
<rect x="104" y="850.4" width="105.4" height="42.6" rx="5" fill="#e9e9e9" fill-opacity=".5"/>
<g stroke="#cfcfcf" stroke-width="1" fill="none"><circle cx="120.3" cy="873" r="10.9"/><circle cx="192.2" cy="873" r="10.9"/><path d="M116 873h8.600M187.9 873h8.600M192.2 868.700v8.600"/></g>
<text x="156.300" y="879.300" text-anchor="middle" font-size="14.2" fill="#cdcdcd" font-family="Liberation Sans">100%</text>
<path d="M677.600 337.200v15.400l3.600-3.200 2.600 5.800 2.400-1-2.600-5.600 4.800-.2z" fill="#111" stroke="#fff" stroke-width="1"/>
</svg>
<div id="top" class="abs">
<div class="abs" style="left:19px;top:7.7px;width:26px;height:2.6px;background:#eceded;border-radius:1px"></div>
<div class="abs" style="left:19px;top:14.7px;width:26px;height:2.6px;background:#eceded;border-radius:1px"></div>
<div class="abs" style="left:19px;top:21.8px;width:26px;height:2.6px;background:#eceded;border-radius:1px"></div>
<div class="t" style="left:71.4px;top:4.6px;font-size:18.5px;letter-spacing:-.84px;color:#dfe0e2">Canvas</div>
<div class="t" style="left:530px;top:4.6px;font-size:18.5px;letter-spacing:-.74px;color:#dfe0e2">Rainbow Valentine Box*</div>
<div class="t" style="left:1124.4px;top:7px;font-size:14px;letter-spacing:.08px;color:#fff;text-shadow:0 0 .4px #fff">My Projects</div>
<div class="t" style="left:1220px;top:7px;font-size:14px;color:#fff;text-shadow:0 0 .4px #fff">Save</div>
<div class="abs" style="left:1275.5px;top:9px;width:1.3px;height:13px;background:#e6e6e6"></div>
<div class="t" style="left:1312px;top:7px;font-size:14px;color:#fff;text-shadow:0 0 .4px #fff">Maker</div>
<svg class="abs" style="left:1362px;top:9px" width="18" height="14" viewBox="0 0 18 14"><path d="M2.2 3.1 L8.5 9.9 L14.8 3.1" fill="none" stroke="#f0f0f0" stroke-width="1.35"/></svg>
<div class="abs" style="left:1408.6px;top:2.2px;width:132px;height:26.2px;background:#7fb72c;border-radius:5px"></div>
<div class="t" style="left:1446.6px;top:6.4px;font-size:15px;color:#e4efd0;letter-spacing:-.12px">Make It</div>
</div>
<div id="side" class="abs">
<div class="lbl" style="top:54.5px">New</div>
<div class="lbl" style="top:134.0px">Templates</div>
<div class="lbl" style="top:213.5px">Projects</div>
<div class="lbl" style="top:293.0px">Images</div>
<div class="lbl" style="top:372.5px">Text</div>
<div class="lbl" style="top:452.0px">Shapes</div>
<div class="lbl" style="top:531.5px">Upload</div>
<svg class="abs" style="left:0;top:0" width="72" height="872" viewBox="0 43 72 872" fill="none" stroke="#596068" stroke-width="1.35" stroke-linecap="round" stroke-linejoin="round">
<circle cx="30.6" cy="77.8" r="13.2" stroke-width="1.2"/><path d="M30.6 72.2v11.2M25 77.8h11.2" stroke-width="1.3"/>
<path d="M25.4 143.6 C27 146.4 34 146.4 36 143.6 L46.2 148 L43 156.2 L38.8 154.6 L38.8 170.2 L22.6 170.2 L22.6 154.6 L18.4 156.2 L14.6 148 Z"/>
<path d="M22.5 223.5h19.8v25.6h-19.8z M31.2 223.5v11.8l3.4-3 3.4 3v-11.8 M17.8 229.4h6.4M17.8 236.2h6.4M17.8 243h6.4"/>
<path d="M14.6 303.2h31.6v26.4h-31.6z"/><circle cx="23" cy="312.2" r="3.3"/><path d="M17.6 329.4l8.6-9.6 5 4.8 8.2-9.6 6.6 10"/>
<path d="M18.6 383.6h24.6v8.4h-2.6v-5.4h-7.2v19.8h3.4v2.8h-11.6v-2.8h3.4v-19.8h-7.2v5.4h-2.8z" stroke-width="1.25"/>
<g transform="translate(0 2.4)"><path d="M24.2 479.6 A9.9 9.9 0 1 1 38.6 468.4" /><path d="M33.2 467.6 l2.6 6.2 6.8 .4 -5.2 4.6 1.8 6.8 -5.8 -3.8 -6 4 1.8 -7 -5 -4.4 6.6 -.6z"/></g>
<g transform="translate(0 -2.3)"><path d="M22 567.4 C17.4 567.4 15.6 563.6 16.4 560.6 C17 558 19.4 556.4 22 556.6 C22 550.6 26.4 548 30.4 548.2 C34.4 548.4 37.6 551 38.2 555 C42.2 554.6 44.8 557.6 44.6 561.2 C44.4 564.8 41.8 567.4 38.4 567.4 Z"/><path d="M30.2 563.8v-4.2h-2.6l2.8-3.4 2.800 3.400h-2.600v4.200z" stroke-width="1.1"/></g>
</svg>
<svg class="abs" style="left:8px;top:828px" width="40" height="34" viewBox="0 0 40 34"><path d="M12 4 H26 A9 9 0 0 1 34 13 A9 9 0 0 1 28.5 21.5 L20 30.5 V22.6 H12 A9 9 0 0 1 3 13.3 A9 9 0 0 1 12 4Z" fill="#8f8f8f"/></svg>
</div>
<div id="tool" class="abs">
<div class="sep" style="left:90.30000000000001px"></div>
<div class="sep" style="left:328px"></div>
<div class="sep" style="left:452px"></div>
<div class="sep" style="left:617px"></div>
<div class="sep" style="left:828px"></div>
<div class="sep" style="left:948.6px"></div>
<div class="l " style="left:108px;top:9px;">Linetype</div>
<div class="box " style="left:108.19999999999999px;top:26.400000000000006px;width:67.6px;height:20.4px;font-size:11.4px;padding-left:6px;line-height:20px">Cut</div>
<div class="abs" style="left:181.2px;top:25.599999999999994px;width:21.8px;height:22px;background:#ece9e4;border:1px solid #dcdad6;border-radius:3px"></div>
<div class="l " style="left:218.5px;top:9px;">Fill</div>
<div class="box " style="left:218.39999999999998px;top:26.400000000000006px;width:67.6px;height:20.4px;font-size:11.4px;padding-left:5.8px;line-height:20px">No Fill</div>
<div class="abs" style="left:292px;top:26px;width:20.6px;height:21.4px;background:#fff;border:1px solid #e2e2e2;border-radius:2px"></div>
<div class="l " style="left:346.2px;top:9px;color:#424242;text-shadow:0 0 .3px #777">Deselect</div>
<div class="l " style="left:411.4px;top:9px;color:#424242;text-shadow:0 0 .3px #777">Edit</div>
<div class="l d" style="left:471.79999999999995px;top:9px;">Align</div>
<div class="l d" style="left:515.2px;top:9px;">Arrange</div>
<div class="l d" style="left:576.6px;top:9px;">Flip</div>
<div class="l d" style="left:634.8px;top:9px;">Size</div>
<div class="l d" style="left:635px;top:30.5px;font-size:11.5px">W</div>
<div class="box " style="left:651.3px;top:27px;width:63.4px;height:19.6px;color:#a2a2a2;border-color:#ececec;font-size:11.6px;padding-left:7px;line-height:18.5px">11.46</div>
<div class="l d" style="left:733.2px;top:30.5px;font-size:11.5px">H</div>
<div class="box boxd" style="left:747.6px;top:27px;width:63.8px;height:19.6px;font-size:11.6px;padding-left:6.5px;line-height:18.5px">6.961</div>
<div class="l d" style="left:845.6px;top:9px;">Rotate</div>
<div class="box boxd" style="left:867.2px;top:29px;width:64.4px;height:19.4px;font-size:11.6px;padding-left:7.5px;line-height:19px">0</div>
<div class="l d" style="left:966.2px;top:9px;">Position</div>
<div class="l d" style="left:966.4000000000001px;top:30.5px;font-size:11.5px">X</div>
<div class="box boxd" style="left:979.2px;top:27.400000000000006px;width:63.4px;height:19px;font-size:11.6px;padding-left:7px;line-height:18px">0.25</div>
<div class="l d" style="left:1055px;top:30.5px;font-size:11.5px">Y</div>
<div class="box boxd" style="left:1069.4px;top:27.400000000000006px;width:63px;height:19px;font-size:11.6px;padding-left:6px;line-height:18px">0.403</div>
<svg class="abs" style="left:0;top:0" width="1181" height="56" viewBox="72 43 1181 56" fill="none" stroke-linecap="round" stroke-linejoin="round">
<path d="M89 68.8 L95.8 62.3 L96.7 66.3 C103.4 66.5 108.3 70.8 108.7 78.3 C106 73.5 102 71.1 96.7 71.1 L95.8 75.7 Z" stroke="#5d646b" stroke-width="1.3"/>
<g transform="translate(234.6 0) scale(-1 1)"><path d="M89 68.8 L95.8 62.3 L96.7 66.3 C103.4 66.5 108.3 70.8 108.7 78.3 C106 73.5 102 71.1 96.7 71.1 L95.8 75.7 Z" stroke="#d6d9dc" stroke-width="1.3"/></g>
<path d="M234.4 77.2h6.8l-3.4 5.8z" fill="#3f3f3f" stroke="none"/>
<path d="M344.6 77.2h6.8l-3.4 5.8z" fill="#3f3f3f" stroke="none"/>
<path d="M366 88.6 L382.8 71" stroke="#b3162c" stroke-width="2.1" stroke-linecap="butt"/>
<rect x="430.4" y="70.2" width="20.2" height="19.8" stroke="#4a4a4a" stroke-width="1.1" stroke-dasharray="2 2.05" stroke-linecap="butt"/>
<path d="M440.5 75.4v9.6M435.7 80.2h9.6" stroke="#4a4a4a" stroke-width="1.1"/>
<g stroke="#4a4a4a" stroke-width="1.05"><path d="M493.4 71.4 l3.6 3.6 -11.8 11.8 -5 1.4 1.4 -5z"/><path d="M491.4 73.4l3.6 3.6M482 83.4l3.2 3.2"/><path d="M483.2 71.6 l-3.4 3.4 13.4 13.4 3.4 -3.4z"/><path d="M485.2 77l1.6-1.6M487.6 79.4l1.6-1.6M490 81.8l1.6-1.6M492.4 84.2l1.6-1.6"/></g>
<path d="M501.6 78.6h6.4l-3.2 5.4z" fill="#3f3f3f" stroke="none"/>
<path d="M544.2 70.6v18.8" stroke="#cdcdcd" stroke-width="1" stroke-dasharray="2 1.6" stroke-linecap="butt"/>
<rect x="546.6" y="75.4" width="14" height="3.4" rx="1.6" stroke="#cdcdcd" stroke-width="1"/><rect x="546.6" y="81.4" width="9.4" height="3.4" rx="1.6" stroke="#cdcdcd" stroke-width="1"/>
<path d="M565.2 78.6h6l-3.0 5z" fill="#cdcdcd" stroke="none"/>
<rect x="594" y="70.6" width="11.6" height="11.6" stroke="#cdcdcd" stroke-width="1" stroke-dasharray="1.6 1.4" stroke-linecap="butt"/>
<rect x="597.4" y="73.8" width="11.6" height="11.6" fill="#fff" stroke="#cdcdcd" stroke-width="1"/><rect x="600.8" y="77.4" width="11.6" height="11.6" fill="#fff" stroke="#cdcdcd" stroke-width="1"/>
<path d="M615.8 78.6h6l-3.0 5z" fill="#cdcdcd" stroke="none"/>
<path d="M653.4 70v20" stroke="#cdcdcd" stroke-width="1" stroke-dasharray="2 1.6" stroke-linecap="butt"/>
<path d="M643.6 73.6v12.6l6.2-6.3z M663.4 73.6v12.6l-6.2-6.3z" stroke="#cdcdcd" stroke-width="1"/>
<path d="M666.6 78.6h6l-3.0 5z" fill="#cdcdcd" stroke="none"/>
<path d="M771.6 70.5V89.2" stroke="#eeeeee" stroke-width="1"/>
<path d="M775.6 78.0h7.2l-3.6 -5.6z" fill="#c2c2c2" stroke="none"/><path d="M775.6 81.0h7.2l-3.6 5.6z" fill="#c2c2c2" stroke="none"/>
<path d="M867.9 70.5V89.2" stroke="#eeeeee" stroke-width="1"/>
<path d="M872.1999999999999 78.0h7.2l-3.6 -5.6z" fill="#c2c2c2" stroke="none"/><path d="M872.1999999999999 81.0h7.2l-3.6 5.6z" fill="#c2c2c2" stroke="none"/>
<path d="M988.6 72.5V91" stroke="#eeeeee" stroke-width="1"/>
<path d="M992.6 80.0h7.2l-3.6 -5.6z" fill="#c2c2c2" stroke="none"/><path d="M992.6 83.0h7.2l-3.6 5.6z" fill="#c2c2c2" stroke="none"/>
<path d="M1100.4 71V89" stroke="#eeeeee" stroke-width="1"/>
<path d="M1103.8000000000002 78.0h7.2l-3.6 -5.6z" fill="#c2c2c2" stroke="none"/><path d="M1103.8000000000002 81.0h7.2l-3.6 5.6z" fill="#c2c2c2" stroke="none"/>
<path d="M1190.2 71V89" stroke="#eeeeee" stroke-width="1"/>
<path d="M1193.6000000000001 78.0h7.2l-3.6 -5.6z" fill="#c2c2c2" stroke="none"/><path d="M1193.6000000000001 81.0h7.2l-3.6 5.6z" fill="#c2c2c2" stroke="none"/>
<g stroke="#cdcdcd" stroke-width="1"><rect x="799.4" y="61.8" width="11.2" height="8" rx="2.4" fill="#fff"/><path d="M801.8 61.8v-2.2a3.2 3.2 0 0 1 6.4 0v2.2"/><circle cx="805" cy="65.8" r="1.2" fill="#cdcdcd"/><path d="M790 66.4v-1.6h4.6M820.8 66.4v-1.6h-4.6" stroke="#dedede"/></g>
<path d="M931.6 79.4 A6.6 6.6 0 1 1 925.6 72.4" stroke="#b9b9b9" stroke-width="1.15"/><path d="M929 78.2h5.2l-2.6 3.6z" fill="#b9b9b9" stroke="none"/>
</svg>
</div>
<div class="abs" style="left:1253px;top:43px;width:283px;height:84px;background:#e0e0e2"></div>
<div class="abs" style="left:1253px;top:127px;width:283px;height:735px;background:#f5f6f8"></div>
<div class="abs" style="left:1253px;top:750px;width:283px;height:46px;background:#dcdcde"></div>
<div class="abs" style="left:1253px;top:862px;width:283px;height:52px;background:#e0e0e2"></div>
<div class="abs" style="left:1253px;top:806.4px;width:283px;height:1.2px;background:#cfcfcf"></div>
<div class="abs" style="left:1253px;top:66.5px;width:147px;height:1.5px;background:#6a7078"></div>
<div class="abs" style="left:1400px;top:67px;width:136px;height:1px;background:#d2d2d4"></div>
<div class="abs" style="left:1226.8px;top:46.782px;width:200px;text-align:center;font-size:13.9px;color:#474747;white-space:nowrap;letter-spacing:-.25px">Layers</div>
<div class="abs" style="left:1374.4px;top:46.658px;width:200px;text-align:center;font-size:14.1px;color:#474747;white-space:nowrap;letter-spacing:-.25px">Color Sync</div>
<div class="abs" style="left:1185.8px;top:106.00800000000001px;width:200px;text-align:center;font-size:11.6px;color:#b4b4b6;white-space:nowrap;">Group</div>
<div class="abs" style="left:1259.2px;top:106.00800000000001px;width:200px;text-align:center;font-size:11.6px;color:#3e3e3e;white-space:nowrap;">UnGroup</div>
<div class="abs" style="left:1340.6px;top:106.00800000000001px;width:200px;text-align:center;font-size:11.6px;color:#3e3e3e;white-space:nowrap;">Duplicate</div>
<div class="abs" style="left:1414.6px;top:106.00800000000001px;width:200px;text-align:center;font-size:11.6px;color:#3e3e3e;white-space:nowrap;">Delete</div>
<div class="abs" style="left:1178.6px;top:900.084px;width:200px;text-align:center;font-size:11.8px;color:#bcbcbe;white-space:nowrap;">Slice</div>
<div class="abs" style="left:1231px;top:900.084px;width:200px;text-align:center;font-size:11.8px;color:#bcbcbe;white-space:nowrap;">Weld</div>
<div class="abs" style="left:1287.4px;top:900.084px;width:200px;text-align:center;font-size:11.8px;color:#bcbcbe;white-space:nowrap;">Attach</div>
<div class="abs" style="left:1348.2px;top:900.084px;width:200px;text-align:center;font-size:11.8px;color:#bcbcbe;white-space:nowrap;">Flatten</div>
<div class="abs" style="left:1414.8px;top:900.084px;width:200px;text-align:center;font-size:11.8px;color:#bcbcbe;white-space:nowrap;">Contour</div>
<div class="abs" style="left:1347.2px;top:827.7629999999999px;font-size:11.35px;color:#3c3c3c;white-space:nowrap;">Blank Canvas</div>
<div class="abs" style="left:1332.6px;top:129.82px;font-size:14px;color:#474747;white-space:nowrap;">Cut</div>
<div class="abs" style="left:1332.6px;top:175.21999999999997px;font-size:14px;color:#474747;white-space:nowrap;">Cut</div>
<div class="abs" style="left:1332.6px;top:220.61999999999998px;font-size:14px;color:#474747;white-space:nowrap;">Cut</div>
<div class="abs" style="left:1332.6px;top:266.02px;font-size:14px;color:#474747;white-space:nowrap;">Cut</div>
<div class="abs" style="left:1332.6px;top:311.41999999999996px;font-size:14px;color:#474747;white-space:nowrap;">Cut</div>
<div class="abs" style="left:1332.6px;top:356.82px;font-size:14px;color:#474747;white-space:nowrap;">Cut</div>
<div class="abs" style="left:1332.6px;top:402.21999999999997px;font-size:14px;color:#474747;white-space:nowrap;">Cut</div>
<div class="abs" style="left:1332.6px;top:447.62px;font-size:14px;color:#474747;white-space:nowrap;">Cut</div>
<div class="abs" style="left:1332.6px;top:493.02px;font-size:14px;color:#474747;white-space:nowrap;">Cut</div>
<div class="abs" style="left:1332.6px;top:538.4200000000001px;font-size:14px;color:#474747;white-space:nowrap;">Cut</div>
<div class="abs" style="left:1332.6px;top:583.82px;font-size:14px;color:#474747;white-space:nowrap;">Cut</div>
<div class="abs" style="left:1332.6px;top:629.22px;font-size:14px;color:#474747;white-space:nowrap;">Cut</div>
<div class="abs" style="left:1332.6px;top:674.62px;font-size:14px;color:#474747;white-space:nowrap;">Cut</div>
<div class="abs" style="left:1332.6px;top:720.02px;font-size:14px;color:#474747;white-space:nowrap;">Cut</div>
<div class="abs" style="left:1332.6px;top:765.4200000000001px;font-size:14px;color:#474747;white-space:nowrap;">Cut</div>
<div class="abs" style="left:1264.2px;top:813px;width:60.2px;height:41.2px;background:#fff;border:1.4px solid #7c7c7c;border-radius:2.5px"></div>
<svg class="abs" style="left:1253px;top:43px" width="283" height="871" viewBox="1253 43 283 871" fill="none">
<defs><clipPath id="lc"><rect x="1253" y="127" width="283" height="680"/></clipPath></defs>
<g clip-path="url(#lc)">
<path d="M1286.8 159.7H1536" stroke="#c9c9cb" stroke-width="1.1"/>
<path d="M1286.8 205.1H1536" stroke="#c9c9cb" stroke-width="1.1"/>
<path d="M1286.8 250.5H1536" stroke="#c9c9cb" stroke-width="1.1"/>
<path d="M1286.8 295.9H1536" stroke="#c9c9cb" stroke-width="1.1"/>
<path d="M1286.8 341.3H1536" stroke="#c9c9cb" stroke-width="1.1"/>
<path d="M1286.8 386.7H1536" stroke="#c9c9cb" stroke-width="1.1"/>
<path d="M1286.8 432.1H1536" stroke="#c9c9cb" stroke-width="1.1"/>
<path d="M1286.8 477.5H1536" stroke="#c9c9cb" stroke-width="1.1"/>
<path d="M1286.8 522.9H1536" stroke="#c9c9cb" stroke-width="1.1"/>
<path d="M1286.8 568.3H1536" stroke="#c9c9cb" stroke-width="1.1"/>
<path d="M1286.8 613.7H1536" stroke="#c9c9cb" stroke-width="1.1"/>
<path d="M1286.8 659.1H1536" stroke="#c9c9cb" stroke-width="1.1"/>
<path d="M1286.8 704.5H1536" stroke="#c9c9cb" stroke-width="1.1"/>
<path d="M1286.8 749.9H1536" stroke="#c9c9cb" stroke-width="1.1"/>
<path d="M1515.4 137.6 C1518.4 132.0 1527.6 132.0 1530.6 137.6 C1527.6 143.0 1518.4 143.0 1515.4 137.6Z" fill="#fff" stroke="#3a3a3a" stroke-width="1.5"/><circle cx="1523.2" cy="137.4" r="3.7" fill="#3a3a3a"/><circle cx="1521.8" cy="136.1" r="1.15" fill="#e8e8e8"/>
<ellipse cx="1303.8" cy="137.0" rx="13.6" ry="13.2" fill="#e9b4b6" stroke="#4a4040" stroke-width="1"/>
<path d="M1515.4 182.99999999999997 C1518.4 177.39999999999998 1527.6 177.39999999999998 1530.6 182.99999999999997 C1527.6 188.39999999999998 1518.4 188.39999999999998 1515.4 182.99999999999997Z" fill="#fff" stroke="#3a3a3a" stroke-width="1.5"/><circle cx="1523.2" cy="182.79999999999998" r="3.7" fill="#3a3a3a"/><circle cx="1521.8" cy="181.49999999999997" r="1.15" fill="#e8e8e8"/>
<ellipse cx="1303.8" cy="182.39999999999998" rx="13.6" ry="13.2" fill="#e9b4b6" stroke="#4a4040" stroke-width="1"/>
<path d="M1515.4 228.39999999999998 C1518.4 222.79999999999998 1527.6 222.79999999999998 1530.6 228.39999999999998 C1527.6 233.79999999999998 1518.4 233.79999999999998 1515.4 228.39999999999998Z" fill="#fff" stroke="#3a3a3a" stroke-width="1.5"/><circle cx="1523.2" cy="228.2" r="3.7" fill="#3a3a3a"/><circle cx="1521.8" cy="226.89999999999998" r="1.15" fill="#e8e8e8"/>
<ellipse cx="1303.8" cy="227.79999999999998" rx="13.6" ry="13.2" fill="#e9b4b6" stroke="#4a4040" stroke-width="1"/>
<path d="M1515.4 273.8 C1518.4 268.2 1527.6 268.2 1530.6 273.8 C1527.6 279.2 1518.4 279.2 1515.4 273.8Z" fill="#fff" stroke="#3a3a3a" stroke-width="1.5"/><circle cx="1523.2" cy="273.6" r="3.7" fill="#3a3a3a"/><circle cx="1521.8" cy="272.3" r="1.15" fill="#e8e8e8"/>
<g fill="#f1efeb" stroke="#e3e1dc" stroke-width="1.2"><circle cx="1295.0" cy="274.3" r="7.0"/><circle cx="1313.0" cy="274.59999999999997" r="6.5"/><circle cx="1303.8" cy="271.8" r="6.3"/><circle cx="1303.8" cy="275.8" r="6.3"/></g><g fill="#f1efeb" stroke="none"><circle cx="1295.0" cy="274.3" r="7.0"/><circle cx="1313.0" cy="274.59999999999997" r="6.5"/><circle cx="1303.8" cy="271.8" r="6.3"/><circle cx="1303.8" cy="275.8" r="6.3"/></g>
<path d="M1301.6 275.59999999999997q2 2.2 4 0" stroke="#d9d5cf" stroke-width=".9"/><circle cx="1300.3999999999999" cy="272.4" r=".7" fill="#d5d0c9"/><circle cx="1307.0" cy="272.4" r=".7" fill="#d5d0c9"/>
<path d="M1515.4 319.2 C1518.4 313.59999999999997 1527.6 313.59999999999997 1530.6 319.2 C1527.6 324.59999999999997 1518.4 324.59999999999997 1515.4 319.2Z" fill="#fff" stroke="#3a3a3a" stroke-width="1.5"/><circle cx="1523.2" cy="319.0" r="3.7" fill="#3a3a3a"/><circle cx="1521.8" cy="317.7" r="1.15" fill="#e8e8e8"/>
<g fill="#7a5f43" stroke="#7a5f43" stroke-width="1.2"><circle cx="1295.0" cy="319.7" r="7.0"/><circle cx="1313.0" cy="319.99999999999994" r="6.5"/><circle cx="1303.8" cy="317.2" r="6.3"/><circle cx="1303.8" cy="321.2" r="6.3"/></g><g fill="#7a5f43" stroke="none"><circle cx="1295.0" cy="319.7" r="7.0"/><circle cx="1313.0" cy="319.99999999999994" r="6.5"/><circle cx="1303.8" cy="317.2" r="6.3"/><circle cx="1303.8" cy="321.2" r="6.3"/></g>
<path d="M1291.8 314.99999999999994 q4 -4.6 9 -2.2 q4 -4 8.6 -.6" stroke="#e9e4dc" stroke-width=".9" opacity=".8"/>
<path d="M1515.4 364.6 C1518.4 359.0 1527.6 359.0 1530.6 364.6 C1527.6 370.0 1518.4 370.0 1515.4 364.6Z" fill="#fff" stroke="#3a3a3a" stroke-width="1.5"/><circle cx="1523.2" cy="364.40000000000003" r="3.7" fill="#3a3a3a"/><circle cx="1521.8" cy="363.1" r="1.15" fill="#e8e8e8"/>
<g fill="#ffffff" stroke="#ececee" stroke-width="1.2"><circle cx="1295.0" cy="365.1" r="7.0"/><circle cx="1313.0" cy="365.4" r="6.5"/><circle cx="1303.8" cy="362.6" r="6.3"/><circle cx="1303.8" cy="366.6" r="6.3"/></g><g fill="#ffffff" stroke="none"><circle cx="1295.0" cy="365.1" r="7.0"/><circle cx="1313.0" cy="365.4" r="6.5"/><circle cx="1303.8" cy="362.6" r="6.3"/><circle cx="1303.8" cy="366.6" r="6.3"/></g>
<path d="M1515.4 410.0 C1518.4 404.4 1527.6 404.4 1530.6 410.0 C1527.6 415.4 1518.4 415.4 1515.4 410.0Z" fill="#fff" stroke="#3a3a3a" stroke-width="1.5"/><circle cx="1523.2" cy="409.8" r="3.7" fill="#3a3a3a"/><circle cx="1521.8" cy="408.5" r="1.15" fill="#e8e8e8"/>
<g fill="#f1efeb" stroke="#e3e1dc" stroke-width="1.2"><circle cx="1295.0" cy="410.5" r="7.0"/><circle cx="1313.0" cy="410.79999999999995" r="6.5"/><circle cx="1303.8" cy="408.0" r="6.3"/><circle cx="1303.8" cy="412.0" r="6.3"/></g><g fill="#f1efeb" stroke="none"><circle cx="1295.0" cy="410.5" r="7.0"/><circle cx="1313.0" cy="410.79999999999995" r="6.5"/><circle cx="1303.8" cy="408.0" r="6.3"/><circle cx="1303.8" cy="412.0" r="6.3"/></g>
<path d="M1301.6 411.79999999999995q2 2.2 4 0" stroke="#d9d5cf" stroke-width=".9"/><circle cx="1300.3999999999999" cy="408.59999999999997" r=".7" fill="#d5d0c9"/><circle cx="1307.0" cy="408.59999999999997" r=".7" fill="#d5d0c9"/>
<path d="M1515.4 455.40000000000003 C1518.4 449.8 1527.6 449.8 1530.6 455.40000000000003 C1527.6 460.8 1518.4 460.8 1515.4 455.40000000000003Z" fill="#fff" stroke="#3a3a3a" stroke-width="1.5"/><circle cx="1523.2" cy="455.20000000000005" r="3.7" fill="#3a3a3a"/><circle cx="1521.8" cy="453.90000000000003" r="1.15" fill="#e8e8e8"/>
<g fill="#7a5f43" stroke="#7a5f43" stroke-width="1.2"><circle cx="1295.0" cy="455.90000000000003" r="7.0"/><circle cx="1313.0" cy="456.2" r="6.5"/><circle cx="1303.8" cy="453.40000000000003" r="6.3"/><circle cx="1303.8" cy="457.40000000000003" r="6.3"/></g><g fill="#7a5f43" stroke="none"><circle cx="1295.0" cy="455.90000000000003" r="7.0"/><circle cx="1313.0" cy="456.2" r="6.5"/><circle cx="1303.8" cy="453.40000000000003" r="6.3"/><circle cx="1303.8" cy="457.40000000000003" r="6.3"/></g>
<path d="M1291.8 451.2 q4 -4.6 9 -2.2 q4 -4 8.6 -.6" stroke="#e9e4dc" stroke-width=".9" opacity=".8"/>
<path d="M1515.4 500.8 C1518.4 495.2 1527.6 495.2 1530.6 500.8 C1527.6 506.2 1518.4 506.2 1515.4 500.8Z" fill="#fff" stroke="#3a3a3a" stroke-width="1.5"/><circle cx="1523.2" cy="500.6" r="3.7" fill="#3a3a3a"/><circle cx="1521.8" cy="499.3" r="1.15" fill="#e8e8e8"/>
<g fill="#ffffff" stroke="#ececee" stroke-width="1.2"><circle cx="1295.0" cy="501.3" r="7.0"/><circle cx="1313.0" cy="501.59999999999997" r="6.5"/><circle cx="1303.8" cy="498.8" r="6.3"/><circle cx="1303.8" cy="502.8" r="6.3"/></g><g fill="#ffffff" stroke="none"><circle cx="1295.0" cy="501.3" r="7.0"/><circle cx="1313.0" cy="501.59999999999997" r="6.5"/><circle cx="1303.8" cy="498.8" r="6.3"/><circle cx="1303.8" cy="502.8" r="6.3"/></g>
<path d="M1515.4 546.2 C1518.4 540.6 1527.6 540.6 1530.6 546.2 C1527.6 551.6 1518.4 551.6 1515.4 546.2Z" fill="#fff" stroke="#3a3a3a" stroke-width="1.5"/><circle cx="1523.2" cy="546.0" r="3.7" fill="#3a3a3a"/><circle cx="1521.8" cy="544.7" r="1.15" fill="#e8e8e8"/>
<path d="M1288.3999999999999 553.1 C1292.3 534.8 1315.3 534.8 1319.2 553.1" fill="none" stroke="#e59f4f" stroke-width="3.2"/>
<path d="M1515.4 591.6 C1518.4 586.0 1527.6 586.0 1530.6 591.6 C1527.6 597.0 1518.4 597.0 1515.4 591.6Z" fill="#fff" stroke="#3a3a3a" stroke-width="1.5"/><circle cx="1523.2" cy="591.4" r="3.7" fill="#3a3a3a"/><circle cx="1521.8" cy="590.1" r="1.15" fill="#e8e8e8"/>
<path d="M1288.3999999999999 600.2 C1292.3 578.2 1315.3 578.2 1319.2 600.2" fill="none" stroke="#edcb6a" stroke-width="3.2"/>
<path d="M1515.4 637.0 C1518.4 631.4 1527.6 631.4 1530.6 637.0 C1527.6 642.4 1518.4 642.4 1515.4 637.0Z" fill="#fff" stroke="#3a3a3a" stroke-width="1.5"/><circle cx="1523.2" cy="636.8" r="3.7" fill="#3a3a3a"/><circle cx="1521.8" cy="635.5" r="1.15" fill="#e8e8e8"/>
<path d="M1288.3999999999999 645.6 C1292.3 622.8 1315.3 622.8 1319.2 645.6" fill="none" stroke="#adcb4b" stroke-width="3.2"/>
<path d="M1515.4 682.4 C1518.4 676.8 1527.6 676.8 1530.6 682.4 C1527.6 687.8 1518.4 687.8 1515.4 682.4Z" fill="#fff" stroke="#3a3a3a" stroke-width="1.5"/><circle cx="1523.2" cy="682.1999999999999" r="3.7" fill="#3a3a3a"/><circle cx="1521.8" cy="680.9" r="1.15" fill="#e8e8e8"/>
<path d="M1288.3999999999999 691.9 C1292.3 667.0 1315.3 667.0 1319.2 691.9" fill="none" stroke="#a2d1c6" stroke-width="3.2"/>
<path d="M1515.4 727.8 C1518.4 722.1999999999999 1527.6 722.1999999999999 1530.6 727.8 C1527.6 733.1999999999999 1518.4 733.1999999999999 1515.4 727.8Z" fill="#fff" stroke="#3a3a3a" stroke-width="1.5"/><circle cx="1523.2" cy="727.5999999999999" r="3.7" fill="#3a3a3a"/><circle cx="1521.8" cy="726.3" r="1.15" fill="#e8e8e8"/>
<path d="M1287.3999999999999 736.1999999999999 C1288.8 714.1999999999999 1318.8 714.1999999999999 1320.2 736.1999999999999 q-2.4 -3.4 -5 -.4 q-2.2 -3.6 -5.4 -1.6 C1308.2 726.1999999999999 1299.3999999999999 726.1999999999999 1298.0 734.1999999999999 q-3.2 -2 -5.4 1.6 q-2.6 -3 -5.2 .4Z" fill="#d5686e" stroke="none"/>
<path d="M1515.4 773.2 C1518.4 767.6 1527.6 767.6 1530.6 773.2 C1527.6 778.6 1518.4 778.6 1515.4 773.2Z" fill="#fff" stroke="#3a3a3a" stroke-width="1.5"/><circle cx="1523.2" cy="773.0" r="3.7" fill="#3a3a3a"/><circle cx="1521.8" cy="771.7" r="1.15" fill="#e8e8e8"/>
<path d="M1291.2 776.6 C1291.8 760.6 1315.8 760.6 1316.3999999999999 776.6 L1307.8 776.6 C1306.8 769.6 1300.8 769.6 1299.8 776.6Z" fill="#e7e5e0"/>
<g fill="#e7e5e0"><circle cx="1291.8" cy="778.2" r="4.4"/><circle cx="1297.3999999999999" cy="777.6" r="4.6"/><circle cx="1315.8" cy="778.2" r="4.4"/><circle cx="1310.2" cy="777.6" r="4.6"/></g>
</g>
<g stroke="#b9b9bb" stroke-width="1.1"><rect x="1276.2" y="75.4" width="19" height="18.6"/><rect x="1280" y="79.2" width="8.2" height="7.6"/><rect x="1284" y="82.8" width="8.2" height="7.6" fill="#e0e0e2"/><rect x="1274.9" y="74.1" width="2.6" height="2.6" fill="#b9b9bb" stroke="none"/><rect x="1274.9" y="92.7" width="2.6" height="2.6" fill="#b9b9bb" stroke="none"/><rect x="1293.9" y="74.1" width="2.6" height="2.6" fill="#b9b9bb" stroke="none"/><rect x="1293.9" y="92.7" width="2.6" height="2.6" fill="#b9b9bb" stroke="none"/></g>
<g stroke="#4a4a4a" stroke-width="1.15"><rect x="1351" y="76" width="10.4" height="9.6"/><rect x="1357.2" y="82.4" width="11" height="10.6" fill="#e0e0e2"/><rect x="1349.6" y="74.6" width="2.8" height="2.8" fill="#4a4a4a" stroke="none"/><rect x="1360" y="74.6" width="2.8" height="2.8" fill="#4a4a4a" stroke="none"/><rect x="1349.6" y="84.2" width="2.8" height="2.8" fill="#4a4a4a" stroke="none"/><rect x="1355.8" y="81" width="2.8" height="2.8" fill="#4a4a4a" stroke="none"/><rect x="1366.8" y="81" width="2.8" height="2.8" fill="#4a4a4a" stroke="none"/><rect x="1355.8" y="91.6" width="2.8" height="2.8" fill="#4a4a4a" stroke="none"/><rect x="1366.8" y="91.6" width="2.8" height="2.8" fill="#4a4a4a" stroke="none"/></g>
<g stroke="#4a4a4a" stroke-width="1.05"><rect x="1432.2" y="75.6" width="11.6" height="15.6"/><rect x="1437" y="78.8" width="12.6" height="15.6" fill="#e0e0e2"/><path d="M1443.3 82.6l1.4 2.9 3.1.4-2.3 2.2.6 3.1-2.8-1.5-2.8 1.5.6-3.1-2.3-2.2 3.1-.4z"/></g>
<g stroke="#4a4a4a" stroke-width="1.1"><path d="M1506 78.4h17.4M1511.8 78.2v-1.8h5.8v1.8M1507.8 80.6l1 11.4q.2 1.8 2 1.8h7.8q1.8 0 2-1.8l1-11.4"/><path d="M1512.2 83v7.6M1514.8 83v7.6M1517.4 83v7.6" stroke-width="1"/></g>
<g transform="translate(0 1)">
<g stroke="#bdbdbf" stroke-width="1.1"><path d="M1269.6 870.2h10.8v4M1269.6 870.2v10.6h4"/><rect x="1272.6" y="873.2" width="10.6" height="10.4" rx="1"/><circle cx="1281.6" cy="882" r="4.6" fill="#e0e0e2"/></g>
<g stroke="#bdbdbf" stroke-width="1.1"><path d="M1321.6 869.6h13.4v7.2a5.6 5.6 0 1 1 -6.4 6.2h-7z"/></g>
<g stroke="#bdbdbf" stroke-width="1.15"><path d="M1391.6 877.4l-7.2-7.4a2.7 2.7 0 0 0 -3.8 3.8l9.6 9.8a3.7 3.7 0 0 0 5.2-5.2l-8.2-8.4"/></g>
<g stroke="#bdbdbf" stroke-width="1.05"><path d="M1448.2 869.6v8.2M1445.6 875.4l2.6 2.8 2.6-2.8"/><path d="M1443 878l-5.2 2.4 10.4 4.8 10.4-4.8-5.2-2.4M1438 883.6l10.2 4.8 10.2-4.800"/></g>
<g stroke="#bdbdbf" stroke-width="1.05"><rect x="1504" y="869.8" width="19" height="17.6" rx="1.2"/><circle cx="1513.6" cy="878.6" r="5.4" stroke-dasharray="2.2 1.8"/></g>
</g>
<g stroke="#3a3a3a" stroke-width="1.2"><path d="M1498.8 834.6c3-5 11.600-5 14.6 0c-3 4.8-11.600 4.800-14.600 0z"/><circle cx="1506.100" cy="834.4" r="2.700" fill="#3a3a3a"/><path d="M1500.6 827.800l11.800 13.400" stroke-width="1.300"/><path d="M1499.6 828.700l11.800 13.400" stroke="#f5f6f8" stroke-width="1"/></g>
</svg>
<div class="abs" style="left:72px;top:98.600px;width:1181px;height:1px;background:#d5d5d7"></div>
<div id="bottombar" class="abs"></div>
</body></html>
